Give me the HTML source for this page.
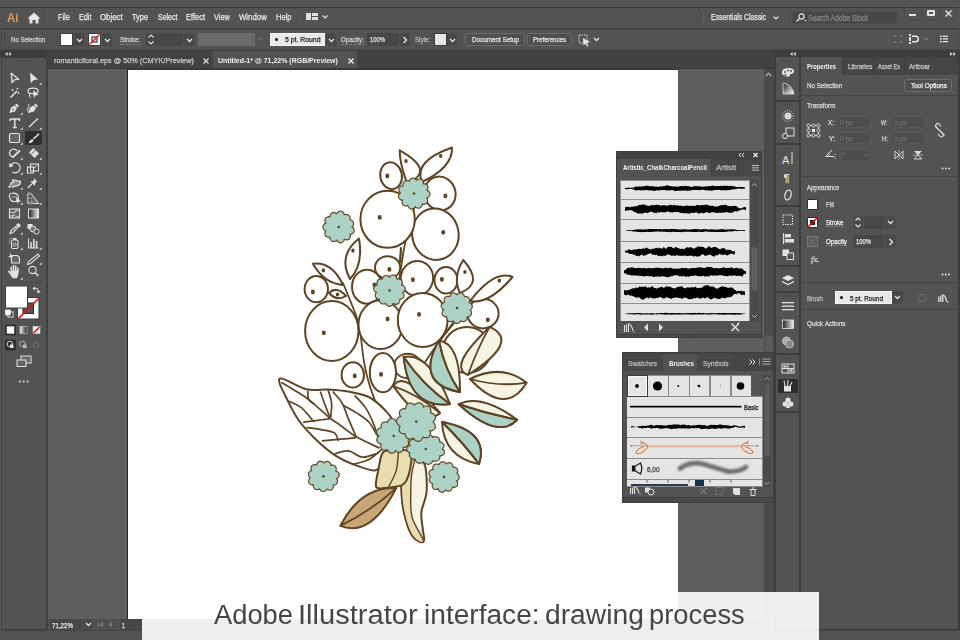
<!DOCTYPE html>
<html><head><meta charset="utf-8">
<style>
*{margin:0;padding:0;box-sizing:border-box}
html,body{width:960px;height:640px;overflow:hidden;background:#535353;font-family:"Liberation Sans",sans-serif}
.a{position:absolute}
.t{position:absolute;white-space:nowrap;transform-origin:0 0}
svg{overflow:visible}
</style></head><body>
<div class="a" style="left:0px;top:0px;width:960px;height:640px;background:#535353;"></div>
<div class="a" style="left:0px;top:7px;width:960px;height:1px;background:#3a3a3a;"></div>
<div class="a" style="left:0px;top:28px;width:960px;height:1px;background:#404040;"></div>
<div class="a" style="left:1px;top:29px;width:958px;height:21px;background:#474747;"></div>
<div class="a" style="left:2px;top:30px;width:956px;height:19px;background:#535353;"></div>
<div class="a" style="left:0px;top:50px;width:960px;height:7px;background:#3d3d3d;"></div>
<div class="a" style="left:47px;top:50px;width:728px;height:19px;background:#424242;"></div>
<div class="a" style="left:213px;top:51px;width:144px;height:18px;background:#535353;"></div>
<div class="a" style="left:47px;top:68px;width:728px;height:1px;background:#383838;"></div>
<div class="a" style="left:0px;top:57px;width:48px;height:574px;background:#3f3f3f;"></div>
<div class="a" style="left:0px;top:57px;width:1px;height:574px;background:#575757;"></div>
<div class="a" style="left:2px;top:58px;width:44px;height:571px;background:#535353;"></div>
<div class="a" style="left:48px;top:69px;width:716px;height:550px;background:#5e5e5e;"></div>
<div class="a" style="left:127px;top:69px;width:1px;height:550px;background:#262626;"></div>
<div class="a" style="left:128px;top:69px;width:551px;height:1px;background:#3a3a3a;"></div>
<div class="a" style="left:678px;top:70px;width:1px;height:549px;background:#555555;"></div>
<div class="a" style="left:128px;top:70px;width:550px;height:549px;background:#ffffff;"></div>
<div class="a" style="left:764px;top:69px;width:10px;height:550px;background:#4a4a4a;"></div>
<div class="a" style="left:774px;top:50px;width:186px;height:580px;background:#3d3d3d;"></div>
<div class="a" style="left:776px;top:57px;width:23px;height:572px;background:#535353;"></div>
<div class="a" style="left:801px;top:57px;width:157px;height:572px;background:#535353;"></div>
<div class="a" style="left:48px;top:619px;width:726px;height:11px;background:#535353;"></div>
<div class="a" style="left:0px;top:630px;width:960px;height:1px;background:#444444;"></div>
<div class="a" style="left:0px;top:631px;width:960px;height:9px;background:#535353;"></div>
<div class="a" style="left:50px;top:619px;width:32px;height:11px;background:#474747;"></div>
<div class="t" style="left:52.00px;top:621.51px;font-size:7.2px;line-height:7.2px;color:#e8e8e8;-webkit-text-stroke:0.25px;transform:scaleX(0.860);">71,22%</div>
<div class="a" style="left:83px;top:619px;width:10px;height:11px;background:#4a4a4a;"></div>
<svg class="a" style="left:85px;top:622px;" width="7" height="5" viewBox="0 0 7 5"><path d="M1 1 L3.5 3.5 L6 1" stroke="#e6e6e6" stroke-width="1.3" fill="none"/></svg>
<div class="a" style="left:94px;top:619px;width:24px;height:11px;background:#4f4f4f;"></div>
<svg class="a" style="left:98px;top:621px;" width="18" height="7" viewBox="0 0 18 7"><rect x="0" y="0.5" width="1" height="6" fill="#777"/><path d="M5 0.5 L1.5 3.5 L5 6.5Z" fill="#777"/><path d="M14 0.5 L10.5 3.5 L14 6.5Z" fill="#777"/></svg>
<div class="a" style="left:120px;top:619px;width:22px;height:11px;background:#474747;"></div>
<div class="t" style="left:121.50px;top:621.51px;font-size:7.2px;line-height:7.2px;color:#e8e8e8;-webkit-text-stroke:0.25px;transform:scaleX(0.749);">1</div>
<div class="t" style="left:7.00px;top:10.57px;font-size:13.5px;line-height:13.5px;color:#d9955c;font-weight:bold;transform:scaleX(0.852);">Ai</div>
<svg class="a" style="left:27px;top:12px;" width="14" height="12" viewBox="0 0 14 12"><path d="M7 0.5 L13.5 6.5 L11.5 6.5 L11.5 11.5 L8.5 11.5 L8.5 8 L5.5 8 L5.5 11.5 L2.5 11.5 L2.5 6.5 L0.5 6.5 Z" fill="#e6e6e6"/></svg>
<div class="a" style="left:47px;top:10px;width:1px;height:14px;background:#5c5c5c;"></div>
<div class="t" style="left:57.80px;top:13.15px;font-size:8.8px;line-height:8.8px;color:#e8e8e8;-webkit-text-stroke:0.25px;transform:scaleX(0.825);">File</div>
<div class="t" style="left:78.90px;top:13.15px;font-size:8.8px;line-height:8.8px;color:#e8e8e8;-webkit-text-stroke:0.25px;transform:scaleX(0.824);">Edit</div>
<div class="t" style="left:100.30px;top:13.15px;font-size:8.8px;line-height:8.8px;color:#e8e8e8;-webkit-text-stroke:0.25px;transform:scaleX(0.893);">Object</div>
<div class="t" style="left:132.00px;top:13.15px;font-size:8.8px;line-height:8.8px;color:#e8e8e8;-webkit-text-stroke:0.25px;transform:scaleX(0.839);">Type</div>
<div class="t" style="left:157.50px;top:13.15px;font-size:8.8px;line-height:8.8px;color:#e8e8e8;-webkit-text-stroke:0.25px;transform:scaleX(0.793);">Select</div>
<div class="t" style="left:186.30px;top:13.15px;font-size:8.8px;line-height:8.8px;color:#e8e8e8;-webkit-text-stroke:0.25px;transform:scaleX(0.851);">Effect</div>
<div class="t" style="left:214.20px;top:13.15px;font-size:8.8px;line-height:8.8px;color:#e8e8e8;-webkit-text-stroke:0.25px;transform:scaleX(0.835);">View</div>
<div class="t" style="left:239.20px;top:13.15px;font-size:8.8px;line-height:8.8px;color:#e8e8e8;-webkit-text-stroke:0.25px;transform:scaleX(0.888);">Window</div>
<div class="t" style="left:275.80px;top:13.15px;font-size:8.8px;line-height:8.8px;color:#e8e8e8;-webkit-text-stroke:0.25px;transform:scaleX(0.856);">Help</div>
<div class="a" style="left:299px;top:12px;width:1px;height:12px;background:#5e5e5e;"></div>
<svg class="a" style="left:306px;top:13px;" width="12" height="8" viewBox="0 0 12 8"><rect x="0" y="0" width="5" height="7" fill="#e0e0e0"/><rect x="6" y="0" width="6" height="3" fill="#e0e0e0"/><rect x="6" y="4" width="6" height="3" fill="#e0e0e0"/></svg>
<svg class="a" style="left:322px;top:15px;" width="6" height="4" viewBox="0 0 6 4"><path d="M0.5 0.5 L3 3 L5.5 0.5" stroke="#e0e0e0" stroke-width="1.2" fill="none"/></svg>
<div class="a" style="left:703px;top:11px;width:1px;height:13px;background:#5e5e5e;"></div>
<div class="t" style="left:710.80px;top:13.15px;font-size:8.8px;line-height:8.8px;color:#e8e8e8;-webkit-text-stroke:0.25px;transform:scaleX(0.776);">Essentials Classic</div>
<svg class="a" style="left:773px;top:16px;" width="6" height="4" viewBox="0 0 6 4"><path d="M0.5 0.5 L3 3 L5.5 0.5" stroke="#e0e0e0" stroke-width="1.2" fill="none"/></svg>
<div class="a" style="left:786px;top:11px;width:1px;height:13px;background:#5e5e5e;"></div>
<div class="a" style="left:792px;top:11px;width:106px;height:13px;background:#474747;border-radius:2px;border:1px solid #4e4e4e;"></div>
<svg class="a" style="left:795px;top:13px;" width="12" height="9" viewBox="0 0 12 9"><circle cx="6.5" cy="3.5" r="2.6" stroke="#e6e6e6" stroke-width="1.2" fill="none"/><path d="M4.6 5.4 L1.5 8.5" stroke="#e6e6e6" stroke-width="1.4"/><path d="M9 7 L12 7 L10.5 8.6Z" fill="#d0d0d0"/></svg>
<div class="t" style="left:808.00px;top:13.57px;font-size:8.3px;line-height:8.3px;color:#8b8b8b;-webkit-text-stroke:0.25px;transform:scaleX(0.804);">Search Adobe Stock</div>
<div class="a" style="left:904px;top:7px;width:53px;height:13px;border:1px solid #4a4a4a;border-top:none;border-radius:0 0 3px 3px;"></div>
<div class="a" style="left:922px;top:8px;width:1px;height:11px;background:#4a4a4a;"></div>
<div class="a" style="left:939px;top:8px;width:1px;height:11px;background:#4a4a4a;"></div>
<div class="a" style="left:909px;top:14px;width:7px;height:2px;background:#e6e6e6;"></div>
<div class="a" style="left:927px;top:10px;width:8px;height:6px;border:2px solid #e6e6e6;border-radius:1px;"></div>
<svg class="a" style="left:945px;top:10px;" width="7" height="7" viewBox="0 0 7 7"><path d="M0.5 0.5 L6.5 6.5 M6.5 0.5 L0.5 6.5" stroke="#e6e6e6" stroke-width="1.3"/></svg>
<svg class="a" style="left:4px;top:33px;" width="2" height="13" viewBox="0 0 2 13"><path d="M1 0 V13" stroke="#3a3a3a" stroke-width="1.5" stroke-dasharray="1 1"/></svg>
<div class="t" style="left:10.60px;top:36.31px;font-size:7.2px;line-height:7.2px;color:#d4d4d4;-webkit-text-stroke:0.25px;transform:scaleX(0.843);">No Selection</div>
<div class="a" style="left:57px;top:32px;width:1px;height:15px;background:#4a4a4a;"></div>
<div class="a" style="left:60px;top:33px;width:13px;height:13px;background:#ffffff;border:1px solid #3c3c3c;"></div>
<div class="a" style="left:74px;top:33px;width:10px;height:13px;background:#474747;border-radius:2px;"></div>
<svg class="a" style="left:75.5px;top:38px;" width="7" height="5" viewBox="0 0 7 5"><path d="M1 1 L3.5 3.5 L6 1" stroke="#e6e6e6" stroke-width="1.3" fill="none"/></svg>
<div class="a" style="left:88px;top:33px;width:13px;height:13px;background:#ffffff;border:1px solid #3c3c3c;"></div>
<svg class="a" style="left:88px;top:33px;" width="13" height="13" viewBox="0 0 13 13"><rect x="4" y="4" width="5" height="5" fill="none" stroke="#333" stroke-width="1.2"/><path d="M1.5 11.5 L11.5 1.5" stroke="#ee1c24" stroke-width="1.6"/></svg>
<div class="a" style="left:102px;top:33px;width:10px;height:13px;background:#474747;border-radius:2px;"></div>
<svg class="a" style="left:103.5px;top:38px;" width="7" height="5" viewBox="0 0 7 5"><path d="M1 1 L3.5 3.5 L6 1" stroke="#e6e6e6" stroke-width="1.3" fill="none"/></svg>
<div class="t" style="left:120.00px;top:36.31px;font-size:7.2px;line-height:7.2px;color:#d4d4d4;-webkit-text-stroke:0.25px;transform:scaleX(0.877);">Stroke:</div>
<div class="a" style="left:120px;top:43.5px;width:20px;height:1px;border-bottom:1px dotted #8c8c8c;"></div>
<div class="a" style="left:146px;top:33px;width:10px;height:13px;background:#474747;border-radius:2px;"></div>
<svg class="a" style="left:147px;top:34px;" width="8" height="11" viewBox="0 0 8 11"><path d="M1.5 3.5 L4 1 L6.5 3.5 M1.5 7.5 L4 10 L6.5 7.5" stroke="#e0e0e0" stroke-width="1.1" fill="none"/></svg>
<div class="a" style="left:156px;top:33px;width:27px;height:13px;background:#474747;"></div>
<div class="a" style="left:184px;top:33px;width:10px;height:13px;background:#474747;border-radius:2px;"></div>
<svg class="a" style="left:185.5px;top:38px;" width="7" height="5" viewBox="0 0 7 5"><path d="M1 1 L3.5 3.5 L6 1" stroke="#e6e6e6" stroke-width="1.3" fill="none"/></svg>
<div class="a" style="left:198px;top:33px;width:57px;height:13px;background:#6b6b6b;"></div>
<svg class="a" style="left:257px;top:37px;" width="7" height="5" viewBox="0 0 7 5"><path d="M1 1 L3.5 3.5 L6 1" stroke="#6a6a6a" stroke-width="1.2" fill="none"/></svg>
<div class="a" style="left:270px;top:33px;width:55px;height:13px;background:#e8e8e8;border:1px solid #f4f4f4;"></div>
<div class="a" style="left:275px;top:38px;width:3px;height:3px;background:#111;border-radius:50%;"></div>
<div class="t" style="left:284.50px;top:36.31px;font-size:7.2px;line-height:7.2px;color:#222;-webkit-text-stroke:0.25px;transform:scaleX(0.954);">5 pt. Round</div>
<div class="a" style="left:326px;top:33px;width:10px;height:13px;background:#474747;border-radius:2px;"></div>
<svg class="a" style="left:327.5px;top:38px;" width="7" height="5" viewBox="0 0 7 5"><path d="M1 1 L3.5 3.5 L6 1" stroke="#e6e6e6" stroke-width="1.3" fill="none"/></svg>
<div class="t" style="left:341.00px;top:36.31px;font-size:7.2px;line-height:7.2px;color:#d4d4d4;-webkit-text-stroke:0.25px;transform:scaleX(0.871);">Opacity:</div>
<div class="a" style="left:341px;top:43.5px;width:23px;height:1px;border-bottom:1px dotted #8c8c8c;"></div>
<div class="a" style="left:367px;top:33px;width:32px;height:13px;background:#474747;"></div>
<div class="t" style="left:369.50px;top:36.31px;font-size:7.2px;line-height:7.2px;color:#e0e0e0;-webkit-text-stroke:0.25px;transform:scaleX(0.815);">100%</div>
<div class="a" style="left:400px;top:33px;width:10px;height:13px;background:#474747;border-radius:2px;"></div>
<svg class="a" style="left:402px;top:36px;" width="6" height="8" viewBox="0 0 6 8"><path d="M1.5 1 L4.5 4 L1.5 7" stroke="#e6e6e6" stroke-width="1.3" fill="none"/></svg>
<div class="t" style="left:415.00px;top:36.31px;font-size:7.2px;line-height:7.2px;color:#bcbcbc;-webkit-text-stroke:0.25px;transform:scaleX(0.833);">Style:</div>
<div class="a" style="left:434px;top:33px;width:13px;height:13px;background:#e6e6e6;border:1px solid #3c3c3c;"></div>
<div class="a" style="left:447px;top:33px;width:10px;height:13px;background:#474747;border-radius:2px;"></div>
<svg class="a" style="left:448.5px;top:38px;" width="7" height="5" viewBox="0 0 7 5"><path d="M1 1 L3.5 3.5 L6 1" stroke="#e6e6e6" stroke-width="1.3" fill="none"/></svg>
<div class="a" style="left:461px;top:32px;width:1px;height:15px;background:#4a4a4a;"></div>
<div class="a" style="left:465px;top:33px;width:60px;height:13px;background:#4f4f4f;border:1px solid #6a6a6a;border-radius:3px;"></div>
<div class="t" style="left:471.50px;top:36.31px;font-size:7.2px;line-height:7.2px;color:#e6e6e6;-webkit-text-stroke:0.25px;transform:scaleX(0.876);">Document Setup</div>
<div class="a" style="left:527px;top:33px;width:45px;height:13px;background:#4f4f4f;border:1px solid #6a6a6a;border-radius:3px;"></div>
<div class="t" style="left:533.00px;top:36.31px;font-size:7.2px;line-height:7.2px;color:#e6e6e6;-webkit-text-stroke:0.25px;transform:scaleX(0.850);">Preferences</div>
<svg class="a" style="left:578px;top:34px;" width="13" height="12" viewBox="0 0 13 12"><rect x="1" y="1" width="8" height="8" fill="none" stroke="#ddd" stroke-width="1" stroke-dasharray="1.5 1"/><path d="M5 4 L12 8 L9 9 L10.5 12 L9 12.5 L7.5 9.8 L5.5 11.5Z" fill="#e6e6e6"/></svg>
<svg class="a" style="left:592.5px;top:37px;" width="7" height="5" viewBox="0 0 7 5"><path d="M1 1 L3.5 3.5 L6 1" stroke="#e6e6e6" stroke-width="1.3" fill="none"/></svg>
<svg class="a" style="left:894px;top:35px;" width="8" height="8" viewBox="0 0 8 8"><g fill="#707070"><rect x="0" y="0" width="2" height="2"/><rect x="6" y="0" width="2" height="2"/><rect x="0" y="6" width="2" height="2"/><rect x="6" y="6" width="2" height="2"/></g></svg>
<svg class="a" style="left:909px;top:34px;" width="11" height="10" viewBox="0 0 11 10"><g fill="#e6e6e6"><rect x="0" y="0" width="2" height="2"/><rect x="0" y="3" width="2" height="4"/><rect x="0" y="8" width="2" height="2"/></g><path d="M3 2.2 H6.5 A2.8 2.8 0 0 1 6.5 7.8 H3" stroke="#e6e6e6" stroke-width="1.5" fill="none"/></svg>
<svg class="a" style="left:923px;top:37px;" width="6" height="4" viewBox="0 0 6 4"><path d="M0.5 0.5 L3 3 L5.5 0.5" stroke="#8a8a8a" stroke-width="1" fill="none"/></svg>
<svg class="a" style="left:940px;top:35px;" width="8" height="8" viewBox="0 0 8 8"><g fill="#e0e0e0"><rect x="0" y="0.5" width="1.6" height="1.6"/><rect x="0" y="3.2" width="1.6" height="1.6"/><rect x="0" y="5.9" width="1.6" height="1.6"/><rect x="2.6" y="0.6" width="5.4" height="1.3"/><rect x="2.6" y="3.3" width="5.4" height="1.3"/><rect x="2.6" y="6" width="5.4" height="1.3"/></g></svg>
<svg class="a" style="left:5px;top:52.3px;" width="6" height="4" viewBox="0 0 6 4"><path d="M2.6 0 L0 2 L2.6 4Z M5.8 0 L3.2 2 L5.8 4Z" fill="#d6d6d6"/></svg>
<svg class="a" style="left:790px;top:52.3px;" width="6" height="4" viewBox="0 0 6 4"><path d="M2.6 0 L0 2 L2.6 4Z M5.8 0 L3.2 2 L5.8 4Z" fill="#d6d6d6"/></svg>
<svg class="a" style="left:950px;top:52.3px;" width="6" height="4" viewBox="0 0 6 4"><path d="M0 0 L2.6 2 L0 4Z M3.2 0 L5.8 2 L3.2 4Z" fill="#d6d6d6"/></svg>
<div class="t" style="left:53.50px;top:56.94px;font-size:7.4px;line-height:7.4px;color:#c8c8c8;-webkit-text-stroke:0.25px;transform:scaleX(0.989);">romanticfloral.eps @ 50% (CMYK/Preview)</div>
<svg class="a" style="left:202.5px;top:58px;" width="6" height="6" viewBox="0 0 6 6"><path d="M0.5 0.5 L5.5 5.5 M5.5 0.5 L0.5 5.5" stroke="#e0e0e0" stroke-width="1.2"/></svg>
<div class="t" style="left:218.00px;top:56.94px;font-size:7.4px;line-height:7.4px;color:#f0f0f0;font-weight:bold;transform:scaleX(0.946);">Untitled-1* @ 71,22% (RGB/Preview)</div>
<svg class="a" style="left:348px;top:58px;" width="6" height="6" viewBox="0 0 6 6"><path d="M0.5 0.5 L5.5 5.5 M5.5 0.5 L0.5 5.5" stroke="#f0f0f0" stroke-width="1.3"/></svg>
<svg class="a" style="left:765px;top:72px;" width="7" height="5" viewBox="0 0 7 5"><path d="M0.8 4 L3.5 1.2 L6.2 4" stroke="#bdbdbd" stroke-width="1.1" fill="none"/></svg>
<svg class="a" style="left:18px;top:60px;" width="12" height="2" viewBox="0 0 12 2"><path d="M0 1 H12" stroke="#3c3c3c" stroke-width="1.5" stroke-dasharray="1 1"/></svg>
<svg class="a" style="left:0;top:0" width="48" height="400" viewBox="0 0 48 400"><path d="M41.7 82.3 L41.7 84.7 L39.3 84.7Z" fill="#e2e2e2"/><path d="M22.7 112.3 L22.7 114.7 L20.3 114.7Z" fill="#e2e2e2"/><path d="M22.7 127.3 L22.7 129.7 L20.3 129.7Z" fill="#e2e2e2"/><path d="M41.7 127.3 L41.7 129.7 L39.3 129.7Z" fill="#e2e2e2"/><path d="M22.7 142.3 L22.7 144.7 L20.3 144.7Z" fill="#e2e2e2"/><path d="M41.7 142.3 L41.7 144.7 L39.3 144.7Z" fill="#e2e2e2"/><path d="M22.7 157.3 L22.7 159.7 L20.3 159.7Z" fill="#e2e2e2"/><path d="M41.7 157.3 L41.7 159.7 L39.3 159.7Z" fill="#e2e2e2"/><path d="M22.7 172.3 L22.7 174.7 L20.3 174.7Z" fill="#e2e2e2"/><path d="M41.7 172.3 L41.7 174.7 L39.3 174.7Z" fill="#e2e2e2"/><path d="M22.7 187.3 L22.7 189.7 L20.3 189.7Z" fill="#e2e2e2"/><path d="M41.7 187.3 L41.7 189.7 L39.3 189.7Z" fill="#e2e2e2"/><path d="M22.7 202.3 L22.7 204.7 L20.3 204.7Z" fill="#e2e2e2"/><path d="M41.7 202.3 L41.7 204.7 L39.3 204.7Z" fill="#e2e2e2"/><path d="M22.7 232.3 L22.7 234.7 L20.3 234.7Z" fill="#e2e2e2"/><path d="M22.7 247.3 L22.7 249.7 L20.3 249.7Z" fill="#e2e2e2"/><path d="M41.7 247.3 L41.7 249.7 L39.3 249.7Z" fill="#e2e2e2"/><path d="M41.7 262.3 L41.7 264.7 L39.3 264.7Z" fill="#e2e2e2"/><path d="M22.7 277.3 L22.7 279.7 L20.3 279.7Z" fill="#e2e2e2"/><rect x="25" y="131" width="17" height="14" rx="1.5" fill="#2e2e2e"/><path d="M11.3 73.2 L18.6 79.3 L14.8 79.6 L12 82.6Z" fill="none" stroke="#e2e2e2" stroke-width="1.3" stroke-linejoin="round"/><path d="M30 72.6 L38.2 79.6 L33.8 79.9 L30.8 83.2Z" fill="#e2e2e2"/><path d="M10.5 97.5 L17 91" stroke="#e2e2e2" stroke-width="1.6"/><circle cx="12.5" cy="90" r="0.9" fill="#e2e2e2"/><circle cx="17.5" cy="88.6" r="0.9" fill="#e2e2e2"/><circle cx="18.5" cy="93" r="0.9" fill="#e2e2e2"/><ellipse cx="33" cy="91" rx="5" ry="2.8" fill="none" stroke="#e2e2e2" stroke-width="1.2"/><path d="M29.5 93 Q28.5 97 31 98" fill="none" stroke="#e2e2e2" stroke-width="1"/><path d="M33 90 L38.8 95 L35.8 95.2 L34 98Z" fill="#e2e2e2"/><path d="M16.5 103.5 L19 106 L17.5 107.5 L15 105Z" fill="#e2e2e2"/><path d="M14.5 105.5 L17 108 L15 111.5 L9.5 113 L11 107.5Z" fill="#e2e2e2"/><circle cx="13" cy="109.6" r="0.9" fill="#535353"/><path d="M35.5 103.5 L38 106 L36.5 107.5 L34 105Z" fill="#e2e2e2"/><path d="M33.5 105.5 L36 108 L34 111.5 L28.5 113 L30 107.5Z" fill="#e2e2e2"/><path d="M28.5 104 Q30 106 28 108 Q27 111 29 113" stroke="#e2e2e2" stroke-width="0.9" fill="none"/><path d="M10 119 H19.5 V121 M10 119 V121 M14.8 119 V127.5 M12.8 127.5 H16.8" stroke="#e2e2e2" stroke-width="1.5" fill="none"/><path d="M29 127 L38 118.5" stroke="#e2e2e2" stroke-width="1.3"/><rect x="9.5" y="133.5" width="10" height="9" rx="1.2" fill="#666" stroke="#e2e2e2" stroke-width="1.2"/><path d="M38.6 133.3 L39.6 134.3 L34 139.6 L32.8 138.4Z" fill="#e2e2e2"/><path d="M32.3 139 L33.5 140.2 Q32.5 143 28.6 143.3 Q29.5 140 32.3 139Z" fill="#e2e2e2"/><path d="M13 157 A4 4 0 1 1 17 151" fill="none" stroke="#e2e2e2" stroke-width="1.3"/><path d="M12.5 157.5 L20 150.5" stroke="#e2e2e2" stroke-width="1.8"/><path d="M33.5 148 L39 153.5 L34.5 158 L29 152.5Z" fill="#e2e2e2"/><path d="M31 154.5 L35.5 150" stroke="#535353" stroke-width="0.9"/><path d="M10.5 166 A5 5 0 1 1 12.5 172" fill="none" stroke="#e2e2e2" stroke-width="1.2"/><path d="M9 163 L9.5 167.5 L13.5 166Z" fill="#e2e2e2"/><rect x="27.5" y="167" width="6" height="6" fill="none" stroke="#e2e2e2" stroke-width="1.1"/><rect x="30.5" y="164" width="8" height="7" fill="none" stroke="#e2e2e2" stroke-width="1.1"/><path d="M34 168 L37.5 165" stroke="#e2e2e2" stroke-width="1"/><path d="M10.5 185.5 Q11 181 13.5 182.5 Q14 179 16.5 180.5 Q18.5 182 20.3 181 Q21 185 17.5 185.5 Q14.5 186.5 12 187" stroke="#e2e2e2" stroke-width="1.3" fill="#8a8a8a" stroke-linejoin="round"/><circle cx="9.6" cy="186.8" r="1.2" fill="#e2e2e2"/><circle cx="12.8" cy="180" r="1" fill="#e2e2e2"/><path d="M33.5 177.8 L37.2 181.5 L35.8 182.2 L34.6 185.8 L30.5 181.7 L34 180.6Z" fill="#e2e2e2"/><path d="M31.8 184 L27.8 188" stroke="#e2e2e2" stroke-width="1.3"/><path d="M10 198.5 Q8 194 12 193.2 Q16.5 192.5 18.3 196 Q19.2 200 15.5 201.5 Q11.5 202.5 10 198.5Z" fill="none" stroke="#e2e2e2" stroke-width="1.1"/><path d="M11.5 197 L16 197" stroke="#999" stroke-width="1.5"/><path d="M15.8 196.2 L21 201.5 L18.5 201.7 L17.2 204Z" fill="#e2e2e2"/><path d="M27.8 193.2 L30.8 193.2 L38.8 203.6 L27.8 203.6Z" fill="#6d6d6d" stroke="#e2e2e2" stroke-width="1"/><path d="M27.8 193.2 L30.8 193.2 L33 203.6 L27.8 203.6Z" fill="#9a9a9a"/><path d="M28 196.5 H32 M28 200 H33.5 M30 193.5 V203.5" stroke="#444" stroke-width="0.9"/><rect x="9.5" y="209" width="10" height="9" fill="#5f5f5f" stroke="#e2e2e2" stroke-width="1.1"/><path d="M10 212 Q14 214 19 210 M12 218 Q13 213 17 209 M10 216 Q15 215 19 217" stroke="#e2e2e2" stroke-width="0.8" fill="none"/><defs><linearGradient id="gr1" x1="0" x2="1"><stop offset="0" stop-color="#222"/><stop offset="1" stop-color="#f0f0f0"/></linearGradient></defs><rect x="28.5" y="209" width="10" height="9" fill="url(#gr1)" stroke="#e2e2e2" stroke-width="1"/><path d="M18.8 224 L19.8 225 L13 232.5 L10 233.5 L11 230.5Z" fill="none" stroke="#e2e2e2" stroke-width="1.2"/><path d="M17 224 L20 227" stroke="#e2e2e2" stroke-width="2"/><rect x="27.5" y="224" width="5" height="5" fill="#e2e2e2"/><circle cx="33" cy="229" r="3" fill="#777" stroke="#e2e2e2" stroke-width="1"/><circle cx="36.5" cy="231.5" r="2.6" fill="#535353" stroke="#e2e2e2" stroke-width="1"/><rect x="11.5" y="240" width="6.5" height="8.5" rx="1.5" fill="none" stroke="#e2e2e2" stroke-width="1.1"/><rect x="13" y="238" width="3.5" height="2" fill="#e2e2e2"/><circle cx="14.7" cy="244.5" r="1.5" fill="none" stroke="#e2e2e2" stroke-width="0.9"/><path d="M9 239 h1 M9 241 h1 M9 243 h1 M11 238.5 h1" stroke="#e2e2e2" stroke-width="0.8"/><path d="M28.5 238.5 V248 H38.5" stroke="#e2e2e2" stroke-width="1" fill="none"/><rect x="30.2" y="242" width="1.6" height="6" fill="#e2e2e2"/><rect x="33" y="239" width="1.6" height="9" fill="#e2e2e2"/><rect x="35.8" y="241" width="1.6" height="7" fill="#e2e2e2"/><path d="M11.5 255.5 H17.5 L19.5 257.5 V263 H11.5Z" fill="#666" stroke="#e2e2e2" stroke-width="1.1"/><path d="M8.5 256.5 H13 M10.5 253.5 V258" stroke="#e2e2e2" stroke-width="0.9"/><path d="M38 254 L39.5 256 L30.5 263.5 L27.5 264.5 L28.5 261.5Z" fill="none" stroke="#e2e2e2" stroke-width="1.1"/><g stroke="#e2e2e2" stroke-width="1.5" stroke-linecap="round" fill="none"><path d="M11.3 272 V267.2"/><path d="M13.5 271 V265.6"/><path d="M15.7 271 V266"/><path d="M17.8 272 V268"/><path d="M8.8 271.2 L11.5 275"/></g><path d="M10.6 270.5 H18.6 Q18.8 275.5 16.8 278.3 H12.5 Q11 276.5 10.6 274Z" fill="#e2e2e2"/><circle cx="32.5" cy="270" r="3.6" fill="none" stroke="#e2e2e2" stroke-width="1.1"/><path d="M35 272.5 L38.5 276" stroke="#e2e2e2" stroke-width="1.6"/><rect x="5" y="282" width="38" height="1" fill="#4a4a4a"/><rect x="17.5" y="297.5" width="21.5" height="21.5" fill="#fff" stroke="#3a3a3a" stroke-width="1"/><rect x="23" y="303" width="10.5" height="10.5" fill="#535353" stroke="#2a2a2a" stroke-width="1"/><path d="M18.5 318.5 L38.5 298.5" stroke="#f00" stroke-width="1.6"/><rect x="5.5" y="286" width="22" height="22" fill="#fff" stroke="#3a3a3a" stroke-width="1"/><path d="M34 288.5 Q38.5 287.5 38.5 292" stroke="#e2e2e2" stroke-width="1.1" fill="none"/><path d="M32.5 288.5 L35 286.5 L35 290.5Z M38.5 293.5 L36.5 291 L40.5 291Z" fill="#e2e2e2"/><rect x="8" y="312" width="5" height="5" fill="#333" stroke="#e2e2e2" stroke-width="1"/><rect x="5.5" y="310" width="5" height="5" fill="#fff" stroke="#e2e2e2" stroke-width="0.8"/><rect x="5" y="324.5" width="11" height="11" rx="1.5" fill="#2f2f2f"/><rect x="7" y="326.5" width="7" height="7" fill="#fff" stroke="#ddd" stroke-width="0.5"/><defs><linearGradient id="gr2" x1="0" x2="1"><stop offset="0" stop-color="#f4f4f4"/><stop offset="1" stop-color="#222"/></linearGradient></defs><rect x="20" y="326.5" width="7" height="7" fill="url(#gr2)" stroke="#ccc" stroke-width="0.6"/><rect x="33" y="326.5" width="7" height="7" fill="#fff" stroke="#ccc" stroke-width="0.6"/><path d="M33.5 333 L39.5 327" stroke="#f00" stroke-width="1.4"/><rect x="5" y="339.5" width="11" height="11" rx="1.5" fill="#2f2f2f"/><circle cx="9.8" cy="344" r="2.8" fill="none" stroke="#e2e2e2" stroke-width="0.9"/><rect x="10" y="344.5" width="3.5" height="3.5" fill="#e2e2e2"/><circle cx="22.5" cy="344" r="2.8" fill="none" stroke="#bbb" stroke-width="0.9"/><rect x="23" y="344.5" width="3.5" height="3.5" fill="#bbb"/><circle cx="36" cy="345" r="2.8" fill="none" stroke="#777" stroke-width="0.9"/><rect x="21" y="356" width="10" height="7" fill="#666" stroke="#e2e2e2" stroke-width="1"/><rect x="17" y="360" width="9" height="6.5" fill="#666" stroke="#e2e2e2" stroke-width="1"/><circle cx="20" cy="381.5" r="1" fill="#e2e2e2"/><circle cx="23.8" cy="381.5" r="1" fill="#e2e2e2"/><circle cx="27.6" cy="381.5" r="1" fill="#e2e2e2"/></svg>
<svg class="a" style="left:0;top:0" width="960" height="640" viewBox="0 0 960 640"><path d="M415.0 205.0 Q405.0 240.0 402.5 257.5 Q400.0 275.0 396.0 300.0" fill="none" stroke="#5f4322" stroke-width="1.8" stroke-linecap="round"/><path d="M343.0 283.0 Q350.0 300.0 355.0 312.5 Q360.0 325.0 362.0 346.5 Q364.0 368.0 370.0 386.5 Q376.0 405.0 392.0 440.0" fill="none" stroke="#5f4322" stroke-width="1.8" stroke-linecap="round"/><path d="M455.0 322.0 Q440.0 340.0 432.5 351.0 Q425.0 362.0 410.0 385.0" fill="none" stroke="#5f4322" stroke-width="1.8" stroke-linecap="round"/><path d="M488.0 298.0 L470.0 316.0" fill="none" stroke="#5f4322" stroke-width="1.5" stroke-linecap="round"/><path d="M279.7 378.6 C282.8 376.7 298.2 387.4 306.2 389.2 C314.3 391.0 321.1 389.1 328.1 389.5 C335.2 389.9 341.7 390.3 348.4 391.5 C355.2 392.8 362.8 394.0 368.8 397.0 C374.7 400.0 380.2 405.1 384.4 409.5 C388.5 413.9 392.7 417.6 393.8 423.6 C394.8 429.6 392.2 439.4 390.6 445.4 C389.1 451.4 387.0 455.3 384.4 459.5 C381.8 463.7 380.2 469.7 375.0 470.4 C369.8 471.2 359.9 466.8 353.1 464.2 C346.4 461.6 340.6 459.0 334.4 454.8 C328.1 450.6 321.4 444.7 315.6 439.2 C309.9 433.7 304.7 428.5 300.0 422.0 C295.3 415.5 290.9 407.4 287.5 400.1 C284.1 392.9 276.6 380.4 279.7 378.6Z" fill="#fff" stroke="#5f4322" stroke-width="2.0" stroke-linejoin="round"/><path d="M281.2 382.2 C283.6 383.6 290.6 387.8 295.3 390.8 C300.0 393.7 303.5 395.5 309.4 400.1 C315.2 404.8 327.0 415.5 330.5 418.6" fill="none" stroke="#5f4322" stroke-width="1.7"/><path d="M288.3 400.9 C290.5 402.1 297.3 404.4 301.6 407.9 C305.9 411.5 312.0 419.7 314.1 422.0" fill="none" stroke="#5f4322" stroke-width="1.7"/><path d="M303.1 422.3 C305.5 422.0 312.6 421.1 317.2 420.4 C321.7 419.8 328.3 418.9 330.5 418.6" fill="none" stroke="#5f4322" stroke-width="1.7"/><path d="M307.8 390.8 C307.9 392.2 307.6 397.1 308.6 399.3 C309.6 401.6 313.2 403.2 314.1 404.0" fill="none" stroke="#5f4322" stroke-width="1.7"/><path d="M320.3 391.5 C321.1 393.7 323.4 400.5 325.0 404.8 C326.6 409.2 329.2 415.5 330.0 417.6" fill="none" stroke="#5f4322" stroke-width="1.7"/><path d="M328.1 390.0 C328.7 392.2 331.2 398.6 331.6 403.2 C332.0 407.9 330.7 415.6 330.5 418.1" fill="none" stroke="#5f4322" stroke-width="1.7"/><path d="M330.5 418.6 C332.4 419.9 337.9 423.6 342.2 426.7 C346.5 429.7 350.0 433.2 356.2 436.8 C362.5 440.4 375.8 446.3 379.7 448.2" fill="none" stroke="#5f4322" stroke-width="1.7"/><path d="M332.8 391.5 C334.4 393.5 339.6 398.7 342.2 403.2 C344.8 407.8 346.1 413.3 348.4 418.9 C350.8 424.5 354.9 433.8 356.2 436.8" fill="none" stroke="#5f4322" stroke-width="1.7"/><path d="M343.8 405.6 C345.8 406.8 352.1 409.9 356.2 412.6 C360.4 415.4 365.4 418.4 368.8 422.0 C372.1 425.6 375.3 432.4 376.6 434.5" fill="none" stroke="#5f4322" stroke-width="1.7"/><path d="M354.7 395.4 C356.5 397.5 362.5 403.2 365.6 407.9 C368.8 412.6 371.4 418.6 373.4 423.6 C375.5 428.5 377.3 435.3 378.1 437.6" fill="none" stroke="#5f4322" stroke-width="1.7"/><path d="M306.2 427.5 C308.9 427.9 317.2 428.9 321.9 429.8 C326.6 430.7 331.6 431.1 334.4 432.9 C337.1 434.8 337.6 439.4 338.3 440.8" fill="none" stroke="#5f4322" stroke-width="1.7"/><path d="M321.9 440.8 C325.0 440.5 334.9 439.7 340.6 439.2 C346.4 438.7 353.6 437.9 356.2 437.6" fill="none" stroke="#5f4322" stroke-width="1.7"/><path d="M334.4 454.0 C336.7 453.5 343.8 450.4 348.4 450.9 C353.1 451.4 357.6 456.8 362.5 457.2 C367.4 457.5 375.5 453.9 378.1 453.2" fill="none" stroke="#5f4322" stroke-width="1.7"/><path d="M353.1 464.2 C355.7 463.4 363.5 462.4 368.8 459.5 C374.0 456.6 381.8 449.1 384.4 447.0" fill="none" stroke="#5f4322" stroke-width="1.7"/><ellipse cx="391.1" cy="175.7" rx="10.8" ry="13.5" transform="rotate(-10 391.1 175.7)" fill="#fff" stroke="#5f4322" stroke-width="2.0"/><ellipse cx="387.3" cy="176" rx="2" ry="2.4" fill="#5f4322"/><ellipse cx="440" cy="193.5" rx="15.5" ry="17" transform="rotate(-15 440 193.5)" fill="#fff" stroke="#5f4322" stroke-width="2.0"/><ellipse cx="445.4" cy="195.9" rx="2" ry="2.4" fill="#5f4322"/><ellipse cx="435.4" cy="234.2" rx="23.2" ry="25.8" transform="rotate(-10 435.4 234.2)" fill="#fff" stroke="#5f4322" stroke-width="2.0"/><ellipse cx="443.2" cy="232.3" rx="2" ry="2.4" fill="#5f4322"/><ellipse cx="387.6" cy="219.3" rx="27.2" ry="28.5" transform="rotate(0 387.6 219.3)" fill="#fff" stroke="#5f4322" stroke-width="2.0"/><ellipse cx="379.7" cy="217.4" rx="2" ry="2.4" fill="#5f4322"/><ellipse cx="316.3" cy="289.1" rx="11.7" ry="13.1" transform="rotate(0 316.3 289.1)" fill="#fff" stroke="#5f4322" stroke-width="2.0"/><ellipse cx="312.9" cy="292" rx="2" ry="2.4" fill="#5f4322"/><ellipse cx="367" cy="286.7" rx="15" ry="17" transform="rotate(0 367 286.7)" fill="#fff" stroke="#5f4322" stroke-width="2.0"/><ellipse cx="374.4" cy="284.8" rx="2" ry="2.4" fill="#5f4322"/><ellipse cx="387.6" cy="267.5" rx="12.6" ry="11.3" transform="rotate(0 387.6 267.5)" fill="#fff" stroke="#5f4322" stroke-width="2.0"/><ellipse cx="389.4" cy="269.4" rx="2" ry="2.4" fill="#5f4322"/><ellipse cx="416.9" cy="278.3" rx="16.2" ry="17.4" transform="rotate(10 416.9 278.3)" fill="#fff" stroke="#5f4322" stroke-width="2.0"/><ellipse cx="412.9" cy="279.7" rx="2" ry="2.4" fill="#5f4322"/><ellipse cx="446" cy="280.2" rx="11.5" ry="13.2" transform="rotate(0 446 280.2)" fill="#fff" stroke="#5f4322" stroke-width="2.0"/><ellipse cx="441.9" cy="279.4" rx="2" ry="2.4" fill="#5f4322"/><ellipse cx="483" cy="313.6" rx="15.6" ry="14.8" transform="rotate(0 483 313.6)" fill="#fff" stroke="#5f4322" stroke-width="2.0"/><ellipse cx="487.8" cy="319.8" rx="2" ry="2.4" fill="#5f4322"/><ellipse cx="407.7" cy="366" rx="13.6" ry="12.2" transform="rotate(0 407.7 366)" fill="#fff" stroke="#5f4322" stroke-width="2.0"/><ellipse cx="352.8" cy="374.9" rx="11.2" ry="12.7" transform="rotate(0 352.8 374.9)" fill="#fff" stroke="#5f4322" stroke-width="2.0"/><ellipse cx="354.7" cy="375.9" rx="2" ry="2.4" fill="#5f4322"/><ellipse cx="382.9" cy="372.6" rx="13.1" ry="19.7" transform="rotate(0 382.9 372.6)" fill="#fff" stroke="#5f4322" stroke-width="2.0"/><ellipse cx="381" cy="374.4" rx="2" ry="2.4" fill="#5f4322"/><ellipse cx="380.5" cy="324.7" rx="22" ry="24.4" transform="rotate(0 380.5 324.7)" fill="#fff" stroke="#5f4322" stroke-width="2.0"/><ellipse cx="387.6" cy="319" rx="2" ry="2.4" fill="#5f4322"/><ellipse cx="422.7" cy="320" rx="24.9" ry="27" transform="rotate(0 422.7 320)" fill="#fff" stroke="#5f4322" stroke-width="2.0"/><ellipse cx="419" cy="314.4" rx="2" ry="2.4" fill="#5f4322"/><ellipse cx="467" cy="350" rx="24" ry="23" transform="rotate(0 467 350)" fill="#fff" stroke="#5f4322" stroke-width="2.0"/><ellipse cx="331.8" cy="331" rx="26.7" ry="29.9" transform="rotate(0 331.8 331)" fill="#fff" stroke="#5f4322" stroke-width="2.0"/><ellipse cx="323.8" cy="332.8" rx="2" ry="2.4" fill="#5f4322"/><path d="M453.0 323.0 Q446.0 332.0 438.0 343.0" fill="none" stroke="#5f4322" stroke-width="2.0" stroke-linecap="round"/><path d="M401.0 248.0 L400.0 262.0" fill="none" stroke="#5f4322" stroke-width="2.2" stroke-linecap="round"/><path d="M407.0 183.0 Q399.6 163.3 399.7 150.3 Q436.6 171.3 407.0 183.0Z" fill="#fff" stroke="#5f4322" stroke-width="2.0" stroke-linejoin="round"/><ellipse cx="406" cy="161" rx="1.7" ry="2.1" fill="#5f4322"/><path d="M422.0 182.0 Q413.0 161.2 452.0 147.5 Q453.0 167.2 422.0 182.0Z" fill="#fff" stroke="#5f4322" stroke-width="2.0" stroke-linejoin="round"/><ellipse cx="440.7" cy="156" rx="1.7" ry="2.1" fill="#5f4322"/><path d="M350.0 279.0 Q337.5 255.2 359.0 238.5 Q363.5 265.2 350.0 279.0Z" fill="#fff" stroke="#5f4322" stroke-width="2.0" stroke-linejoin="round"/><ellipse cx="352.9" cy="250.7" rx="1.7" ry="2.1" fill="#5f4322"/><path d="M343.0 285.0 Q332.1 261.6 312.9 263.8 Q324.1 283.6 343.0 285.0Z" fill="#fff" stroke="#5f4322" stroke-width="2.0" stroke-linejoin="round"/><ellipse cx="323.4" cy="270.4" rx="1.7" ry="2.1" fill="#5f4322"/><path d="M346.0 296.0 Q336.5 285.5 329.0 293.0 Q336.5 301.5 346.0 296.0Z" fill="#fff" stroke="#5f4322" stroke-width="2.0" stroke-linejoin="round"/><ellipse cx="337.5" cy="294.5" rx="1.7" ry="2.1" fill="#5f4322"/><path d="M460.0 293.0 Q452.4 277.5 463.2 260.0 Q484.4 283.5 460.0 293.0Z" fill="#fff" stroke="#5f4322" stroke-width="2.0" stroke-linejoin="round"/><ellipse cx="464.9" cy="272" rx="1.7" ry="2.1" fill="#5f4322"/><path d="M470.0 301.0 Q494.8 269.0 512.5 277.0 Q488.8 305.0 470.0 301.0Z" fill="#fff" stroke="#5f4322" stroke-width="2.0" stroke-linejoin="round"/><ellipse cx="499.3" cy="280.7" rx="1.7" ry="2.1" fill="#5f4322"/><path d="M440.0 413.0 Q403.3 368.4 393.4 386.2 Q423.3 428.4 440.0 413.0Z" fill="#f8f4e4" stroke="#5f4322" stroke-width="2.0" stroke-linejoin="round"/><path d="M393.4 386.2 Q417.3 394.4 440.0 413.0" fill="none" stroke="#5f4322" stroke-width="1.8"/><path d="M450.0 404.0 Q429.1 351.5 403.7 357.0 Q409.1 409.5 450.0 404.0Z" fill="#f8f4e4" stroke="#5f4322" stroke-width="2.0" stroke-linejoin="round"/><path d="M450.0 404.0 Q409.1 409.5 403.7 357.0 Q423.1 385.5 450.0 404.0Z" fill="#acd1c5" stroke="#5f4322" stroke-width="2.0" stroke-linejoin="round"/><path d="M403.7 357.0 Q423.1 385.5 450.0 404.0" fill="none" stroke="#5f4322" stroke-width="1.8"/><path d="M460.0 392.0 Q460.5 343.7 439.0 340.6 Q414.5 383.7 460.0 392.0Z" fill="#f8f4e4" stroke="#5f4322" stroke-width="2.0" stroke-linejoin="round"/><path d="M460.0 392.0 Q414.5 383.7 439.0 340.6 Q444.5 369.7 460.0 392.0Z" fill="#acd1c5" stroke="#5f4322" stroke-width="2.0" stroke-linejoin="round"/><path d="M439.0 340.6 Q444.5 369.7 460.0 392.0" fill="none" stroke="#5f4322" stroke-width="1.8"/><path d="M468.0 375.0 Q521.1 341.1 489.7 326.9 Q447.1 367.1 468.0 375.0Z" fill="#f8f4e4" stroke="#5f4322" stroke-width="2.0" stroke-linejoin="round"/><path d="M489.7 326.9 Q477.1 349.1 468.0 375.0" fill="none" stroke="#5f4322" stroke-width="1.8"/><path d="M470.0 379.0 Q501.7 363.1 526.6 382.7 Q505.7 417.1 470.0 379.0Z" fill="#f8f4e4" stroke="#5f4322" stroke-width="2.0" stroke-linejoin="round"/><path d="M526.6 382.7 Q499.7 387.1 470.0 379.0" fill="none" stroke="#5f4322" stroke-width="1.8"/><path d="M458.7 404.2 Q498.1 440.1 517.1 419.7 Q481.1 393.1 458.7 404.2Z" fill="#f8f4e4" stroke="#5f4322" stroke-width="2.0" stroke-linejoin="round"/><path d="M458.7 404.2 Q498.1 440.1 517.1 419.7 Q488.1 414.1 458.7 404.2Z" fill="#acd1c5" stroke="#5f4322" stroke-width="2.0" stroke-linejoin="round"/><path d="M517.1 419.7 Q488.1 414.1 458.7 404.2" fill="none" stroke="#5f4322" stroke-width="1.8"/><path d="M442.0 422.0 Q489.5 431.0 479.0 464.0 Q443.5 457.0 442.0 422.0Z" fill="#f8f4e4" stroke="#5f4322" stroke-width="2.0" stroke-linejoin="round"/><path d="M442.0 422.0 Q489.5 431.0 479.0 464.0 Q463.5 443.0 442.0 422.0Z" fill="#acd1c5" stroke="#5f4322" stroke-width="2.0" stroke-linejoin="round"/><path d="M479.0 464.0 Q463.5 443.0 442.0 422.0" fill="none" stroke="#5f4322" stroke-width="1.8"/><path d="M414.2 458.9 C417.6 458.6 422.4 458.6 424.5 464.1 C426.6 469.5 427.1 483.5 426.6 491.5 C426.0 499.6 422.0 505.9 421.4 512.2 C420.8 518.5 422.4 524.5 422.8 529.3 C423.2 534.2 425.4 540.2 423.6 541.4 C421.9 542.5 415.8 541.1 412.5 536.2 C409.2 531.4 405.7 520.8 403.9 512.2 C402.0 503.6 401.3 492.4 401.3 484.7 C401.3 476.9 401.7 470.1 403.9 465.8 C406.0 461.5 410.8 459.2 414.2 458.9Z" fill="#f8f4e4" stroke="#5f4322" stroke-width="2.0" stroke-linejoin="round"/><path d="M414.2 458.9 C415.5 460.3 412.2 468.9 411.6 474.4 C411.0 479.8 410.7 484.4 410.8 491.5 C410.8 498.7 410.0 509.0 412.1 517.3 C414.3 525.6 423.6 538.2 423.6 541.4 C423.7 544.5 415.8 541.1 412.5 536.2 C409.2 531.4 405.7 520.8 403.9 512.2 C402.0 503.6 401.3 492.4 401.3 484.7 C401.3 476.9 401.7 470.1 403.9 465.8 C406.0 461.5 412.9 457.5 414.2 458.9Z" fill="#e8ddb0" stroke="#5f4322" stroke-width="1.4" stroke-linejoin="round"/><path d="M383.3 452.0 C386.4 448.9 392.4 450.3 397.0 450.3 C401.6 450.3 408.6 448.9 410.8 452.0 C412.9 455.2 410.8 464.5 410.1 469.2 C409.4 473.9 407.8 477.7 406.5 480.4 C405.1 483.0 404.0 484.0 402.2 485.0 C400.3 486.1 398.2 486.2 395.3 486.7 C392.4 487.3 388.2 488.1 385.0 488.1 C381.8 488.1 377.1 489.9 376.0 486.7 C375.0 483.6 377.3 475.0 378.5 469.2 C379.7 463.4 380.2 455.2 383.3 452.0Z" fill="#e8ddb0" stroke="#5f4322" stroke-width="2.0" stroke-linejoin="round"/><path d="M398.4 452.0 C398.0 455.2 397.8 465.1 396.2 470.9 C394.5 476.8 389.7 484.5 388.4 487.3" fill="none" stroke="#5f4322" stroke-width="1.4"/><path d="M396.2 488.1 Q360.5 486.4 340.3 525.9 Q370.8 538.0 396.2 488.1Z" fill="#c9a676" stroke="#5f4322" stroke-width="2.0" stroke-linejoin="round"/><path d="M340.3 525.9 Q370.8 511.0 396.2 488.1" fill="none" stroke="#5f4322" stroke-width="1.8"/><path d="M429.9 193.5 L430.0 194.1 L430.0 194.6 L429.8 195.2 L429.5 195.7 L429.2 196.2 L428.8 196.6 L428.4 197.1 L427.8 197.5 L427.0 197.7 L426.9 198.2 L427.3 198.9 L427.5 199.5 L427.6 200.1 L427.6 200.7 L427.5 201.3 L427.4 201.9 L427.2 202.4 L426.9 202.9 L426.5 203.3 L426.0 203.6 L425.5 203.8 L424.9 204.1 L424.3 204.2 L423.7 204.3 L423.0 204.2 L422.2 204.0 L422.2 204.8 L422.1 205.5 L421.8 206.0 L421.5 206.5 L421.1 206.9 L420.7 207.3 L420.3 207.7 L419.8 208.0 L419.3 208.1 L418.7 208.1 L418.2 208.1 L417.6 208.0 L417.1 207.9 L416.5 207.7 L415.9 207.4 L415.4 206.7 L415.0 207.3 L414.5 207.9 L414.0 208.3 L413.5 208.5 L412.9 208.7 L412.4 208.9 L411.8 209.0 L411.3 209.0 L410.7 208.9 L410.2 208.6 L409.7 208.3 L409.3 208.0 L408.9 207.6 L408.5 207.1 L408.2 206.5 L408.0 205.8 L407.6 205.5 L406.9 205.8 L406.3 205.9 L405.7 205.9 L405.1 205.8 L404.5 205.6 L404.0 205.4 L403.5 205.2 L403.1 204.8 L402.8 204.4 L402.5 203.9 L402.3 203.3 L402.1 202.8 L402.1 202.2 L402.1 201.6 L402.2 200.9 L402.6 200.1 L401.6 200.1 L400.9 199.9 L400.4 199.6 L399.9 199.2 L399.5 198.8 L399.1 198.3 L398.8 197.9 L398.6 197.3 L398.5 196.8 L398.6 196.2 L398.7 195.7 L398.8 195.1 L399.1 194.5 L399.4 194.0 L399.8 193.5 L400.5 193.0 L400.2 192.5 L399.6 192.0 L399.3 191.4 L399.0 190.9 L398.9 190.3 L398.8 189.7 L398.8 189.1 L398.8 188.6 L399.0 188.0 L399.3 187.6 L399.7 187.1 L400.1 186.7 L400.6 186.4 L401.1 186.1 L401.8 185.9 L402.5 185.8 L403.1 185.6 L402.9 184.9 L403.0 184.2 L403.1 183.7 L403.3 183.1 L403.5 182.6 L403.8 182.1 L404.1 181.7 L404.5 181.3 L405.0 181.1 L405.5 180.9 L406.0 180.7 L406.6 180.6 L407.1 180.6 L407.7 180.7 L408.4 180.8 L409.1 181.4 L409.3 180.5 L409.6 179.9 L410.0 179.5 L410.4 179.1 L410.9 178.8 L411.4 178.6 L411.9 178.3 L412.4 178.2 L412.9 178.2 L413.5 178.3 L414.0 178.4 L414.5 178.6 L415.0 178.9 L415.5 179.2 L416.0 179.6 L416.3 180.2 L416.9 180.0 L417.5 179.5 L418.1 179.2 L418.7 179.0 L419.3 179.0 L419.9 178.9 L420.5 179.0 L421.0 179.1 L421.5 179.3 L421.9 179.7 L422.3 180.2 L422.7 180.7 L422.9 181.2 L423.2 181.8 L423.3 182.4 L423.3 183.2 L423.3 183.8 L424.1 183.7 L424.8 183.8 L425.4 183.9 L425.9 184.2 L426.4 184.5 L426.9 184.8 L427.3 185.2 L427.6 185.6 L427.8 186.2 L427.9 186.7 L428.0 187.3 L428.0 187.9 L427.9 188.4 L427.8 189.0 L427.5 189.6 L426.8 190.3 L427.7 190.6 L428.3 191.0 L428.8 191.4 L429.2 191.9 L429.5 192.4 L429.7 193.0Z" fill="#acd1c5" stroke="#654826" stroke-width="1.2" stroke-linejoin="round"/><circle cx="414.0" cy="193.5" r="1.3" fill="#5f4322"/><path d="M351.8 227.0 L352.8 227.5 L353.3 228.0 L353.6 228.6 L353.9 229.1 L354.0 229.7 L354.1 230.3 L354.2 230.9 L354.1 231.4 L353.9 231.9 L353.6 232.4 L353.2 232.9 L352.8 233.3 L352.3 233.6 L351.7 233.9 L351.1 234.1 L350.2 234.2 L350.2 234.7 L350.4 235.5 L350.4 236.1 L350.3 236.7 L350.2 237.3 L349.9 237.9 L349.7 238.4 L349.4 238.8 L348.9 239.2 L348.4 239.5 L347.9 239.6 L347.3 239.8 L346.7 239.9 L346.1 239.8 L345.5 239.7 L344.8 239.4 L344.2 239.3 L344.0 240.2 L343.7 240.8 L343.3 241.3 L342.9 241.7 L342.5 242.0 L342.0 242.4 L341.5 242.6 L340.9 242.8 L340.4 242.7 L339.8 242.6 L339.2 242.4 L338.7 242.2 L338.2 241.9 L337.7 241.5 L337.2 241.0 L336.9 240.0 L336.3 240.7 L335.7 241.0 L335.1 241.3 L334.6 241.4 L334.0 241.4 L333.4 241.4 L332.9 241.4 L332.3 241.3 L331.9 241.0 L331.4 240.6 L331.1 240.2 L330.7 239.8 L330.4 239.3 L330.2 238.8 L330.0 238.1 L330.0 237.4 L329.5 237.2 L328.8 237.3 L328.1 237.2 L327.5 237.1 L327.0 236.8 L326.5 236.6 L326.0 236.2 L325.6 235.9 L325.3 235.4 L325.1 234.9 L325.0 234.3 L324.9 233.7 L324.9 233.1 L325.0 232.5 L325.2 231.9 L325.5 231.3 L325.8 230.7 L325.0 230.4 L324.4 230.0 L324.0 229.6 L323.6 229.1 L323.3 228.6 L323.1 228.1 L322.9 227.6 L322.8 227.0 L322.9 226.4 L323.1 225.9 L323.4 225.4 L323.6 224.9 L324.0 224.4 L324.4 224.0 L325.0 223.6 L325.9 223.3 L325.5 222.7 L325.1 222.1 L325.0 221.5 L324.9 220.9 L324.9 220.3 L325.0 219.7 L325.1 219.1 L325.3 218.6 L325.6 218.2 L326.0 217.8 L326.5 217.5 L327.0 217.2 L327.5 217.0 L328.1 216.8 L328.8 216.7 L329.6 216.8 L330.0 216.6 L330.0 215.9 L330.2 215.3 L330.4 214.8 L330.8 214.3 L331.1 213.8 L331.5 213.5 L331.9 213.1 L332.4 212.8 L332.9 212.7 L333.5 212.7 L334.0 212.7 L334.6 212.7 L335.2 212.8 L335.7 213.0 L336.3 213.4 L336.8 213.8 L337.2 212.9 L337.7 212.3 L338.2 211.9 L338.7 211.6 L339.2 211.4 L339.8 211.2 L340.4 211.0 L340.9 211.0 L341.5 211.2 L342.0 211.5 L342.5 211.8 L343.0 212.2 L343.4 212.6 L343.7 213.1 L344.0 213.8 L344.2 214.7 L344.7 214.7 L345.4 214.5 L346.0 214.4 L346.5 214.5 L347.1 214.6 L347.6 214.7 L348.1 214.9 L348.6 215.2 L349.0 215.6 L349.3 216.0 L349.6 216.5 L349.8 217.0 L350.0 217.5 L350.1 218.1 L350.1 218.7 L350.0 219.4 L350.1 219.9 L350.9 220.0 L351.4 220.2 L351.9 220.6 L352.3 220.9 L352.7 221.3 L353.1 221.8 L353.3 222.2 L353.5 222.7 L353.6 223.3 L353.6 223.8 L353.5 224.4 L353.4 224.9 L353.2 225.5 L352.9 226.0 L352.5 226.5Z" fill="#acd1c5" stroke="#654826" stroke-width="1.2" stroke-linejoin="round"/><circle cx="338.7" cy="227.0" r="1.3" fill="#5f4322"/><path d="M404.7 290.5 L404.4 291.0 L404.0 291.5 L403.5 292.0 L402.7 292.3 L403.2 292.9 L403.5 293.5 L403.8 294.1 L403.9 294.6 L404.0 295.2 L404.0 295.8 L403.9 296.3 L403.8 296.9 L403.5 297.4 L403.2 297.8 L402.8 298.2 L402.3 298.5 L401.8 298.8 L401.3 299.1 L400.7 299.2 L399.9 299.3 L399.7 299.6 L399.8 300.4 L399.7 301.1 L399.6 301.7 L399.3 302.2 L399.0 302.7 L398.7 303.2 L398.3 303.6 L397.9 303.9 L397.4 304.1 L396.8 304.2 L396.2 304.3 L395.7 304.3 L395.1 304.2 L394.4 304.1 L393.8 303.7 L393.2 303.3 L392.9 304.2 L392.5 304.8 L392.1 305.2 L391.6 305.6 L391.1 305.9 L390.6 306.1 L390.1 306.3 L389.5 306.4 L388.9 306.3 L388.4 306.1 L387.9 305.9 L387.4 305.6 L386.9 305.2 L386.5 304.8 L386.1 304.2 L385.8 303.4 L385.3 303.6 L384.6 303.8 L384.1 304.0 L383.5 304.0 L382.9 304.0 L382.4 303.9 L381.8 303.8 L381.3 303.6 L380.9 303.3 L380.5 302.9 L380.2 302.4 L379.9 302.0 L379.6 301.5 L379.4 300.9 L379.3 300.3 L379.4 299.6 L379.2 299.2 L378.4 299.1 L377.9 299.0 L377.3 298.7 L376.9 298.4 L376.4 298.0 L376.1 297.6 L375.7 297.2 L375.4 296.8 L375.3 296.2 L375.3 295.7 L375.2 295.1 L375.3 294.6 L375.4 294.0 L375.6 293.5 L375.9 292.9 L376.5 292.3 L375.5 292.0 L374.9 291.5 L374.5 291.0 L374.2 290.5 L373.9 290.0 L373.8 289.4 L373.6 288.8 L373.6 288.3 L373.8 287.7 L374.0 287.2 L374.3 286.7 L374.7 286.3 L375.1 285.8 L375.6 285.5 L376.3 285.2 L377.1 285.0 L377.2 284.5 L376.9 283.8 L376.9 283.2 L376.9 282.6 L377.0 282.1 L377.1 281.5 L377.3 281.0 L377.6 280.5 L377.9 280.1 L378.4 279.8 L378.9 279.5 L379.4 279.3 L379.9 279.1 L380.5 279.0 L381.1 279.0 L381.8 279.1 L382.4 279.1 L382.5 278.3 L382.7 277.7 L383.0 277.2 L383.4 276.8 L383.8 276.4 L384.2 276.1 L384.7 275.8 L385.2 275.5 L385.8 275.5 L386.3 275.5 L386.9 275.6 L387.4 275.7 L388.0 275.9 L388.5 276.2 L389.0 276.6 L389.5 277.4 L390.0 276.4 L390.5 275.9 L391.1 275.5 L391.6 275.3 L392.2 275.1 L392.8 275.0 L393.4 274.9 L394.0 274.9 L394.5 275.2 L395.0 275.5 L395.4 275.9 L395.8 276.3 L396.2 276.8 L396.5 277.4 L396.7 278.0 L396.7 278.9 L397.2 279.1 L397.9 278.9 L398.5 278.9 L399.1 279.0 L399.7 279.2 L400.2 279.4 L400.7 279.7 L401.2 280.0 L401.6 280.4 L401.8 280.9 L402.0 281.4 L402.2 282.0 L402.2 282.5 L402.3 283.1 L402.2 283.8 L401.9 284.4 L401.7 285.1 L402.6 285.2 L403.2 285.5 L403.7 285.9 L404.1 286.3 L404.4 286.8 L404.8 287.3 L405.0 287.8 L405.2 288.3 L405.1 288.9 L405.0 289.4 L404.9 290.0Z" fill="#acd1c5" stroke="#654826" stroke-width="1.2" stroke-linejoin="round"/><circle cx="389.5" cy="290.5" r="1.3" fill="#5f4322"/><path d="M471.9 308.0 L471.7 308.5 L471.3 309.0 L470.9 309.5 L470.2 309.9 L470.6 310.4 L471.0 311.0 L471.3 311.6 L471.4 312.1 L471.5 312.7 L471.5 313.3 L471.4 313.8 L471.3 314.4 L471.1 314.9 L470.7 315.3 L470.3 315.7 L469.9 316.0 L469.4 316.3 L468.8 316.6 L468.2 316.8 L467.5 316.8 L467.0 317.0 L467.1 317.8 L467.0 318.4 L466.9 319.0 L466.6 319.5 L466.3 320.0 L466.0 320.4 L465.6 320.8 L465.2 321.1 L464.7 321.3 L464.2 321.5 L463.6 321.6 L463.1 321.6 L462.5 321.6 L461.9 321.4 L461.3 321.2 L460.6 320.6 L460.4 321.5 L460.0 322.0 L459.5 322.4 L459.1 322.7 L458.6 323.0 L458.1 323.2 L457.5 323.3 L457.0 323.4 L456.5 323.4 L455.9 323.2 L455.4 323.0 L454.9 322.8 L454.5 322.4 L454.0 322.1 L453.6 321.6 L453.3 320.9 L452.7 321.1 L452.1 321.4 L451.5 321.6 L450.9 321.7 L450.3 321.7 L449.8 321.6 L449.2 321.5 L448.7 321.3 L448.2 321.0 L447.9 320.6 L447.5 320.1 L447.2 319.6 L447.0 319.1 L446.8 318.6 L446.7 317.9 L446.8 317.2 L446.6 316.7 L445.7 316.8 L445.0 316.7 L444.4 316.5 L443.9 316.2 L443.4 315.8 L443.0 315.5 L442.6 315.0 L442.3 314.6 L442.2 314.0 L442.1 313.4 L442.1 312.8 L442.2 312.2 L442.4 311.6 L442.7 311.0 L443.1 310.5 L444.0 309.8 L443.0 309.5 L442.5 309.0 L442.1 308.5 L441.7 308.0 L441.5 307.5 L441.3 306.9 L441.2 306.3 L441.1 305.8 L441.3 305.2 L441.5 304.7 L441.8 304.2 L442.2 303.8 L442.6 303.3 L443.1 303.0 L443.7 302.6 L444.5 302.5 L444.6 302.0 L444.3 301.2 L444.2 300.6 L444.2 300.0 L444.2 299.4 L444.4 298.8 L444.5 298.3 L444.8 297.7 L445.1 297.3 L445.6 297.0 L446.1 296.7 L446.7 296.5 L447.2 296.4 L447.8 296.3 L448.5 296.3 L449.2 296.5 L449.9 296.7 L450.0 295.9 L450.2 295.3 L450.5 294.8 L450.9 294.3 L451.3 293.9 L451.7 293.6 L452.2 293.3 L452.7 293.0 L453.3 293.0 L453.8 293.0 L454.4 293.1 L454.9 293.2 L455.5 293.4 L456.0 293.6 L456.5 294.0 L457.0 294.7 L457.5 294.1 L458.0 293.6 L458.5 293.3 L459.1 293.1 L459.7 292.9 L460.2 292.8 L460.8 292.8 L461.4 292.8 L461.9 293.0 L462.3 293.3 L462.8 293.7 L463.2 294.1 L463.6 294.5 L463.9 295.0 L464.1 295.6 L464.2 296.4 L464.6 296.7 L465.3 296.5 L466.0 296.5 L466.5 296.6 L467.1 296.8 L467.6 297.0 L468.1 297.3 L468.6 297.6 L468.9 298.0 L469.2 298.5 L469.4 299.0 L469.6 299.5 L469.7 300.1 L469.7 300.7 L469.6 301.3 L469.4 301.9 L469.1 302.6 L469.9 302.8 L470.5 303.1 L470.9 303.5 L471.3 303.9 L471.6 304.4 L471.9 304.8 L472.1 305.3 L472.3 305.8 L472.3 306.4 L472.2 306.9 L472.1 307.5Z" fill="#acd1c5" stroke="#654826" stroke-width="1.2" stroke-linejoin="round"/><circle cx="457.0" cy="308.0" r="1.3" fill="#5f4322"/><path d="M411.0 436.0 L410.9 436.6 L410.8 437.2 L410.5 437.8 L410.2 438.3 L409.9 438.9 L409.4 439.3 L408.9 439.8 L408.1 440.1 L408.1 440.7 L408.5 441.4 L408.6 442.0 L408.6 442.7 L408.6 443.3 L408.5 443.9 L408.4 444.5 L408.2 445.0 L407.8 445.5 L407.4 446.0 L406.9 446.3 L406.4 446.7 L405.9 446.9 L405.3 447.2 L404.6 447.3 L403.9 447.3 L403.3 447.5 L403.4 448.4 L403.3 449.2 L403.0 449.8 L402.7 450.4 L402.3 450.9 L401.9 451.4 L401.4 451.8 L400.9 452.2 L400.3 452.3 L399.6 452.3 L399.0 452.3 L398.4 452.2 L397.7 452.1 L397.1 451.8 L396.4 451.4 L395.7 450.5 L395.3 451.4 L394.8 452.0 L394.3 452.4 L393.7 452.7 L393.1 453.0 L392.5 453.2 L391.9 453.3 L391.3 453.3 L390.7 453.2 L390.1 452.9 L389.6 452.6 L389.1 452.2 L388.6 451.8 L388.1 451.3 L387.8 450.6 L387.6 449.8 L387.0 449.7 L386.2 450.1 L385.5 450.2 L384.8 450.3 L384.1 450.2 L383.5 450.0 L382.9 449.8 L382.3 449.6 L381.8 449.2 L381.5 448.7 L381.2 448.1 L380.9 447.5 L380.8 446.9 L380.7 446.2 L380.7 445.5 L380.9 444.6 L381.1 443.9 L380.2 443.8 L379.5 443.6 L378.9 443.2 L378.4 442.8 L378.0 442.4 L377.6 441.9 L377.2 441.4 L376.9 440.8 L376.9 440.2 L376.9 439.6 L377.0 438.9 L377.1 438.3 L377.4 437.7 L377.7 437.1 L378.1 436.5 L378.9 436.0 L378.2 435.5 L377.6 434.9 L377.2 434.3 L377.0 433.6 L376.8 433.0 L376.6 432.4 L376.6 431.7 L376.6 431.1 L376.8 430.5 L377.2 430.0 L377.6 429.5 L378.1 429.0 L378.6 428.6 L379.2 428.3 L379.9 428.0 L380.8 427.9 L381.2 427.6 L381.0 426.8 L381.0 426.1 L381.1 425.4 L381.3 424.8 L381.5 424.2 L381.8 423.7 L382.1 423.2 L382.6 422.7 L383.1 422.4 L383.7 422.2 L384.3 422.0 L384.9 421.9 L385.6 421.9 L386.2 422.0 L387.0 422.2 L387.7 422.5 L387.8 421.4 L388.1 420.7 L388.5 420.1 L389.0 419.6 L389.5 419.2 L390.1 418.9 L390.6 418.6 L391.2 418.4 L391.8 418.4 L392.5 418.5 L393.1 418.7 L393.7 419.0 L394.3 419.3 L394.8 419.7 L395.4 420.3 L395.8 421.2 L396.4 420.8 L397.0 420.2 L397.7 419.9 L398.4 419.7 L399.0 419.6 L399.7 419.6 L400.3 419.6 L400.9 419.7 L401.5 420.0 L402.0 420.4 L402.4 420.9 L402.8 421.4 L403.1 422.0 L403.4 422.7 L403.6 423.4 L403.6 424.3 L403.8 424.8 L404.7 424.7 L405.4 424.7 L406.0 424.9 L406.6 425.2 L407.2 425.5 L407.7 425.8 L408.2 426.2 L408.6 426.7 L408.8 427.3 L408.9 427.9 L409.0 428.5 L409.0 429.2 L408.9 429.8 L408.8 430.5 L408.5 431.2 L407.7 432.0 L408.7 432.3 L409.3 432.7 L409.8 433.2 L410.2 433.7 L410.5 434.2 L410.7 434.8 L410.9 435.4Z" fill="#acd1c5" stroke="#654826" stroke-width="1.2" stroke-linejoin="round"/><circle cx="393.7" cy="436.0" r="1.3" fill="#5f4322"/><path d="M442.3 449.0 L443.1 449.5 L443.7 450.0 L444.0 450.5 L444.3 451.1 L444.4 451.6 L444.5 452.2 L444.6 452.7 L444.5 453.3 L444.2 453.8 L443.8 454.2 L443.3 454.7 L442.8 455.0 L442.2 455.4 L441.5 455.7 L440.7 455.9 L439.5 455.8 L439.8 456.6 L439.9 457.2 L439.8 457.8 L439.7 458.3 L439.4 458.8 L439.2 459.3 L438.8 459.8 L438.4 460.2 L437.9 460.5 L437.3 460.8 L436.7 461.0 L436.0 461.1 L435.3 461.2 L434.6 461.2 L433.9 461.1 L433.0 460.9 L432.6 461.2 L432.3 461.9 L431.9 462.5 L431.5 462.9 L430.9 463.3 L430.4 463.7 L429.8 464.0 L429.1 464.2 L428.5 464.3 L427.8 464.2 L427.1 464.1 L426.5 464.0 L425.8 463.7 L425.2 463.4 L424.6 463.0 L424.0 462.5 L423.5 461.9 L422.8 462.5 L422.1 462.8 L421.4 463.0 L420.7 463.2 L420.0 463.2 L419.3 463.2 L418.7 463.1 L418.0 463.0 L417.4 462.7 L416.9 462.3 L416.5 461.9 L416.0 461.5 L415.7 461.0 L415.4 460.4 L415.2 459.8 L415.3 459.0 L414.5 459.0 L413.7 459.0 L413.0 458.9 L412.4 458.7 L411.8 458.4 L411.2 458.1 L410.7 457.8 L410.2 457.4 L409.8 457.0 L409.6 456.5 L409.5 455.9 L409.4 455.4 L409.4 454.9 L409.4 454.3 L409.6 453.7 L410.0 453.1 L409.8 452.7 L408.9 452.4 L408.3 452.0 L407.8 451.5 L407.4 451.1 L407.0 450.6 L406.8 450.1 L406.6 449.5 L406.5 449.0 L406.7 448.5 L406.9 447.9 L407.2 447.4 L407.6 446.9 L408.0 446.5 L408.5 446.1 L409.3 445.7 L410.3 445.4 L409.6 444.8 L409.4 444.2 L409.3 443.7 L409.2 443.1 L409.3 442.6 L409.4 442.0 L409.6 441.5 L409.8 441.0 L410.3 440.6 L410.7 440.3 L411.3 439.9 L411.9 439.7 L412.5 439.4 L413.2 439.2 L413.9 439.2 L414.9 439.3 L415.0 438.7 L415.0 438.0 L415.2 437.4 L415.6 436.9 L415.9 436.4 L416.4 435.9 L416.9 435.5 L417.4 435.2 L418.0 435.0 L418.7 434.9 L419.4 434.8 L420.1 434.9 L420.8 434.9 L421.5 435.1 L422.2 435.3 L422.9 435.8 L423.5 436.0 L424.0 435.4 L424.6 435.0 L425.2 434.7 L425.8 434.4 L426.4 434.2 L427.1 434.1 L427.8 434.0 L428.4 434.1 L429.1 434.2 L429.7 434.5 L430.2 434.7 L430.8 435.1 L431.3 435.4 L431.8 435.9 L432.1 436.4 L432.3 437.4 L433.2 436.8 L434.0 436.7 L434.7 436.6 L435.4 436.7 L436.1 436.8 L436.7 437.0 L437.4 437.2 L437.9 437.4 L438.4 437.8 L438.8 438.3 L439.1 438.7 L439.4 439.2 L439.6 439.8 L439.7 440.3 L439.7 440.9 L439.4 441.6 L440.0 441.9 L440.8 442.1 L441.5 442.3 L442.1 442.7 L442.6 443.0 L443.0 443.4 L443.4 443.9 L443.8 444.3 L444.0 444.8 L444.0 445.4 L444.0 445.9 L443.9 446.4 L443.7 447.0 L443.5 447.5 L443.1 448.0 L442.6 448.5Z" fill="#acd1c5" stroke="#654826" stroke-width="1.2" stroke-linejoin="round"/><circle cx="425.8" cy="449.0" r="1.3" fill="#5f4322"/><path d="M433.4 421.6 L433.0 422.2 L433.9 422.8 L434.4 423.5 L434.8 424.2 L435.1 424.9 L435.2 425.6 L435.3 426.3 L435.4 427.1 L435.3 427.8 L434.9 428.4 L434.5 428.9 L433.9 429.5 L433.4 429.9 L432.7 430.3 L432.0 430.7 L431.1 430.9 L429.8 430.7 L430.3 431.8 L430.4 432.6 L430.4 433.4 L430.3 434.2 L430.0 434.9 L429.7 435.5 L429.4 436.1 L429.0 436.7 L428.4 437.1 L427.7 437.4 L427.1 437.6 L426.3 437.7 L425.6 437.7 L424.8 437.7 L424.0 437.5 L423.2 437.0 L422.7 437.4 L422.4 438.3 L422.0 439.1 L421.5 439.7 L420.9 440.2 L420.3 440.6 L419.7 441.0 L419.1 441.3 L418.4 441.4 L417.7 441.3 L417.0 441.1 L416.3 440.8 L415.6 440.5 L415.0 440.0 L414.4 439.5 L413.9 438.7 L413.5 437.8 L412.7 438.4 L412.0 438.8 L411.3 438.9 L410.6 439.0 L409.9 439.1 L409.3 439.0 L408.6 438.9 L408.0 438.7 L407.4 438.3 L406.9 437.9 L406.5 437.3 L406.1 436.8 L405.7 436.2 L405.4 435.5 L405.2 434.8 L405.3 433.8 L404.4 433.9 L403.5 433.9 L402.8 433.8 L402.1 433.5 L401.4 433.2 L400.9 432.8 L400.3 432.4 L399.8 431.9 L399.5 431.3 L399.3 430.6 L399.2 429.9 L399.2 429.2 L399.2 428.5 L399.3 427.8 L399.6 427.0 L400.1 426.3 L399.9 425.7 L398.9 425.3 L398.2 424.8 L397.7 424.2 L397.3 423.6 L396.9 423.0 L396.6 422.3 L396.4 421.6 L396.4 420.9 L396.6 420.2 L396.9 419.6 L397.2 418.9 L397.7 418.3 L398.2 417.7 L398.8 417.2 L399.6 416.8 L400.8 416.6 L400.0 415.7 L399.6 414.9 L399.5 414.1 L399.4 413.4 L399.5 412.6 L399.6 411.9 L399.8 411.3 L400.0 410.6 L400.5 410.1 L401.0 409.7 L401.7 409.3 L402.3 409.0 L403.0 408.8 L403.7 408.6 L404.6 408.6 L405.6 408.9 L405.7 408.1 L405.8 407.1 L406.0 406.3 L406.3 405.6 L406.7 405.0 L407.2 404.4 L407.7 403.9 L408.2 403.5 L408.9 403.2 L409.6 403.1 L410.3 403.1 L411.0 403.2 L411.8 403.4 L412.5 403.6 L413.2 404.0 L413.9 404.7 L414.6 405.1 L415.1 404.3 L415.7 403.8 L416.3 403.4 L416.9 403.2 L417.6 403.0 L418.3 402.8 L418.9 402.8 L419.6 402.8 L420.2 403.0 L420.9 403.3 L421.4 403.7 L422.0 404.2 L422.5 404.7 L422.9 405.2 L423.3 406.0 L423.3 407.2 L424.4 406.3 L425.3 406.0 L426.1 406.0 L426.8 406.0 L427.5 406.1 L428.2 406.3 L428.9 406.6 L429.5 406.9 L429.9 407.5 L430.3 408.1 L430.6 408.7 L430.8 409.4 L430.9 410.2 L431.0 410.9 L430.9 411.8 L430.5 412.7 L431.1 413.1 L432.0 413.2 L432.8 413.6 L433.4 414.0 L434.0 414.5 L434.5 415.0 L434.9 415.6 L435.3 416.2 L435.5 416.8 L435.5 417.5 L435.4 418.2 L435.2 418.9 L435.0 419.6 L434.6 420.3 L434.1 421.0Z" fill="#acd1c5" stroke="#654826" stroke-width="1.2" stroke-linejoin="round"/><circle cx="416.3" cy="421.6" r="1.3" fill="#5f4322"/><path d="M338.9 476.3 L338.6 476.8 L338.2 477.3 L337.8 477.8 L337.1 478.2 L336.5 478.6 L337.0 479.2 L337.3 479.7 L337.5 480.3 L337.5 480.9 L337.5 481.4 L337.5 482.0 L337.4 482.5 L337.2 483.0 L336.9 483.4 L336.6 483.8 L336.1 484.2 L335.7 484.5 L335.2 484.8 L334.7 485.0 L334.0 485.1 L333.2 485.0 L333.4 485.9 L333.5 486.6 L333.3 487.2 L333.1 487.8 L332.9 488.3 L332.6 488.8 L332.2 489.3 L331.8 489.7 L331.3 489.9 L330.8 490.0 L330.2 490.1 L329.7 490.1 L329.1 490.1 L328.5 490.0 L327.9 489.7 L327.2 489.2 L326.8 489.3 L326.4 489.9 L326.0 490.4 L325.5 490.7 L325.0 491.0 L324.5 491.2 L324.0 491.4 L323.5 491.5 L323.0 491.5 L322.4 491.4 L321.9 491.2 L321.4 491.0 L321.0 490.7 L320.5 490.3 L320.1 489.9 L319.8 489.4 L319.4 488.8 L318.8 489.3 L318.2 489.5 L317.6 489.6 L317.0 489.6 L316.5 489.5 L315.9 489.4 L315.4 489.3 L314.9 489.1 L314.5 488.7 L314.2 488.3 L313.9 487.8 L313.6 487.3 L313.4 486.8 L313.3 486.2 L313.2 485.6 L313.4 484.7 L312.6 484.8 L311.8 484.8 L311.2 484.6 L310.6 484.3 L310.1 484.0 L309.7 483.6 L309.3 483.2 L308.9 482.8 L308.7 482.3 L308.7 481.7 L308.7 481.1 L308.7 480.5 L308.9 479.9 L309.1 479.4 L309.4 478.8 L310.0 478.2 L310.2 477.7 L309.6 477.3 L309.2 476.8 L308.9 476.3 L308.7 475.8 L308.5 475.3 L308.4 474.7 L308.3 474.2 L308.4 473.6 L308.6 473.1 L308.8 472.6 L309.2 472.2 L309.5 471.8 L309.9 471.4 L310.4 471.0 L311.0 470.7 L311.7 470.6 L311.2 469.8 L311.0 469.1 L311.0 468.5 L311.0 467.9 L311.2 467.3 L311.3 466.8 L311.5 466.3 L311.8 465.8 L312.3 465.4 L312.7 465.2 L313.3 464.9 L313.8 464.8 L314.4 464.6 L315.0 464.6 L315.7 464.7 L316.5 465.0 L316.7 464.5 L316.9 463.8 L317.1 463.2 L317.5 462.8 L317.9 462.3 L318.3 462.0 L318.7 461.6 L319.2 461.4 L319.7 461.2 L320.3 461.2 L320.9 461.3 L321.4 461.4 L322.0 461.6 L322.5 461.8 L323.0 462.2 L323.5 462.7 L324.0 462.9 L324.5 462.3 L325.0 462.0 L325.5 461.7 L326.1 461.6 L326.7 461.4 L327.2 461.4 L327.8 461.4 L328.3 461.5 L328.8 461.8 L329.2 462.1 L329.6 462.5 L330.0 462.9 L330.4 463.4 L330.6 463.9 L330.8 464.6 L330.7 465.6 L331.6 465.1 L332.3 465.0 L332.9 465.1 L333.5 465.2 L334.0 465.4 L334.5 465.7 L335.0 465.9 L335.4 466.3 L335.7 466.7 L335.9 467.3 L336.1 467.8 L336.2 468.4 L336.3 468.9 L336.2 469.5 L336.1 470.2 L335.7 470.9 L336.2 471.2 L337.0 471.4 L337.5 471.7 L338.0 472.1 L338.4 472.6 L338.8 473.1 L339.0 473.6 L339.3 474.1 L339.3 474.6 L339.3 475.2 L339.1 475.8Z" fill="#acd1c5" stroke="#654826" stroke-width="1.2" stroke-linejoin="round"/><circle cx="323.5" cy="476.3" r="1.3" fill="#5f4322"/><path d="M459.3 476.9 L459.3 477.4 L459.2 478.0 L459.0 478.5 L458.7 479.0 L458.5 479.4 L458.1 479.9 L457.7 480.3 L457.1 480.7 L456.4 480.9 L457.1 481.7 L457.4 482.3 L457.6 482.9 L457.6 483.5 L457.6 484.1 L457.5 484.7 L457.4 485.3 L457.2 485.8 L456.8 486.2 L456.3 486.5 L455.8 486.8 L455.3 487.1 L454.7 487.3 L454.1 487.4 L453.4 487.4 L452.6 487.1 L452.3 487.5 L452.2 488.2 L452.0 488.7 L451.7 489.2 L451.4 489.7 L451.0 490.1 L450.6 490.4 L450.2 490.8 L449.7 491.0 L449.2 491.1 L448.6 491.1 L448.1 491.1 L447.5 491.0 L447.0 490.9 L446.4 490.6 L445.9 490.3 L445.4 490.2 L445.0 490.9 L444.5 491.3 L444.0 491.6 L443.5 491.9 L442.9 492.1 L442.4 492.2 L441.8 492.3 L441.3 492.3 L440.8 492.0 L440.3 491.8 L439.8 491.5 L439.4 491.1 L439.0 490.7 L438.6 490.2 L438.4 489.5 L438.3 488.5 L437.5 489.2 L436.8 489.4 L436.1 489.5 L435.5 489.5 L434.9 489.4 L434.4 489.2 L433.9 489.0 L433.4 488.7 L433.0 488.3 L432.7 487.8 L432.5 487.3 L432.3 486.7 L432.2 486.1 L432.2 485.5 L432.3 484.8 L432.6 484.0 L432.3 483.6 L431.7 483.5 L431.1 483.2 L430.7 482.8 L430.3 482.4 L429.9 482.0 L429.6 481.6 L429.4 481.1 L429.2 480.6 L429.2 480.0 L429.2 479.5 L429.3 479.0 L429.5 478.4 L429.7 477.9 L430.0 477.4 L430.4 476.9 L430.8 476.4 L430.1 475.9 L429.7 475.4 L429.4 474.8 L429.2 474.3 L429.1 473.7 L429.0 473.2 L429.0 472.6 L429.1 472.1 L429.4 471.6 L429.7 471.1 L430.1 470.7 L430.5 470.3 L431.0 470.0 L431.6 469.7 L432.2 469.5 L433.1 469.6 L432.9 468.8 L432.7 468.1 L432.8 467.5 L432.9 466.9 L433.1 466.3 L433.3 465.8 L433.6 465.3 L433.9 464.9 L434.4 464.6 L434.9 464.4 L435.4 464.2 L436.0 464.1 L436.6 464.0 L437.2 464.1 L437.8 464.2 L438.5 464.6 L439.0 464.5 L439.2 463.8 L439.6 463.3 L440.0 462.9 L440.4 462.6 L440.9 462.3 L441.4 462.1 L441.9 461.9 L442.4 461.8 L442.9 461.8 L443.5 461.9 L444.0 462.1 L444.5 462.3 L445.0 462.6 L445.5 462.9 L445.9 463.4 L446.3 464.0 L446.9 463.3 L447.5 463.0 L448.0 462.9 L448.6 462.8 L449.2 462.7 L449.7 462.7 L450.3 462.8 L450.8 463.0 L451.2 463.3 L451.6 463.7 L452.0 464.1 L452.3 464.6 L452.6 465.1 L452.8 465.6 L452.9 466.3 L452.8 467.1 L453.5 467.1 L454.2 467.1 L454.8 467.2 L455.3 467.4 L455.8 467.7 L456.3 468.0 L456.7 468.3 L457.1 468.7 L457.4 469.2 L457.5 469.7 L457.6 470.3 L457.7 470.8 L457.7 471.4 L457.6 472.0 L457.4 472.6 L457.0 473.2 L457.0 473.7 L457.6 474.0 L458.1 474.4 L458.4 474.9 L458.7 475.4 L458.9 475.9 L459.1 476.4Z" fill="#acd1c5" stroke="#654826" stroke-width="1.2" stroke-linejoin="round"/><circle cx="444.0" cy="476.9" r="1.3" fill="#5f4322"/></svg>
<div class="a" style="left:776px;top:100px;width:23px;height:2px;background:#3d3d3d;"></div>
<div class="a" style="left:776px;top:143px;width:23px;height:2px;background:#3d3d3d;"></div>
<div class="a" style="left:776px;top:205px;width:23px;height:2px;background:#3d3d3d;"></div>
<div class="a" style="left:776px;top:265px;width:23px;height:2px;background:#3d3d3d;"></div>
<div class="a" style="left:776px;top:291px;width:23px;height:2px;background:#3d3d3d;"></div>
<div class="a" style="left:776px;top:353px;width:23px;height:2px;background:#3d3d3d;"></div>
<div class="a" style="left:776px;top:411px;width:23px;height:2px;background:#3d3d3d;"></div>
<svg class="a" style="left:783px;top:60px;" width="10" height="2" viewBox="0 0 10 2"><path d="M0 1 H10" stroke="#3c3c3c" stroke-width="1.2" stroke-dasharray="1 1"/></svg>
<svg class="a" style="left:783px;top:104px;" width="10" height="2" viewBox="0 0 10 2"><path d="M0 1 H10" stroke="#3c3c3c" stroke-width="1.2" stroke-dasharray="1 1"/></svg>
<svg class="a" style="left:783px;top:147px;" width="10" height="2" viewBox="0 0 10 2"><path d="M0 1 H10" stroke="#3c3c3c" stroke-width="1.2" stroke-dasharray="1 1"/></svg>
<svg class="a" style="left:783px;top:209px;" width="10" height="2" viewBox="0 0 10 2"><path d="M0 1 H10" stroke="#3c3c3c" stroke-width="1.2" stroke-dasharray="1 1"/></svg>
<svg class="a" style="left:783px;top:268px;" width="10" height="2" viewBox="0 0 10 2"><path d="M0 1 H10" stroke="#3c3c3c" stroke-width="1.2" stroke-dasharray="1 1"/></svg>
<svg class="a" style="left:783px;top:295px;" width="10" height="2" viewBox="0 0 10 2"><path d="M0 1 H10" stroke="#3c3c3c" stroke-width="1.2" stroke-dasharray="1 1"/></svg>
<svg class="a" style="left:783px;top:357px;" width="10" height="2" viewBox="0 0 10 2"><path d="M0 1 H10" stroke="#3c3c3c" stroke-width="1.2" stroke-dasharray="1 1"/></svg>
<svg class="a" style="left:0;top:0" width="960" height="640" viewBox="0 0 960 640"><path d="M782 74 Q781 68 788 68 Q795 68 794 72 Q793 74 791 74 Q789 74 790 76 Q786 78 782 74Z" fill="#e2e2e2"/><circle cx="785" cy="72" r="1" fill="#535353"/><circle cx="788" cy="70.5" r="1" fill="#535353"/><circle cx="791" cy="71" r="1" fill="#535353"/><circle cx="785.5" cy="75" r="1" fill="#535353"/><defs><linearGradient id="rg1" x1="0" y1="0" x2="1" y2="1"><stop offset="0" stop-color="#222"/><stop offset="1" stop-color="#fff"/></linearGradient></defs><path d="M783 83 Q792 84 794 94 L783 94Z" fill="url(#rg1)" stroke="#e2e2e2" stroke-width="0.8"/><circle cx="788" cy="116" r="3.6" fill="#d8d8d8"/><circle cx="788" cy="116" r="5.4" fill="none" stroke="#cfcfcf" stroke-width="0.9" stroke-dasharray="1 1"/><rect x="786" y="128" width="8" height="8" fill="none" stroke="#e2e2e2" stroke-width="1"/><circle cx="785" cy="136" r="2.6" fill="#535353" stroke="#e2e2e2" stroke-width="1"/><text x="782" y="164" font-family="Liberation Sans" font-size="11" fill="#e2e2e2">A</text><rect x="791.5" y="152" width="1" height="12" fill="#e2e2e2"/><text x="783.5" y="182" font-family="Liberation Sans" font-size="11" font-weight="bold" fill="#e2e2e2">¶</text><ellipse cx="788" cy="195" rx="3" ry="5" transform="rotate(15 788 195)" fill="none" stroke="#e2e2e2" stroke-width="1.3"/><rect x="783" y="215" width="9.5" height="9.5" fill="none" stroke="#e2e2e2" stroke-width="1" stroke-dasharray="1.5 1"/><rect x="783" y="233" width="1.2" height="11" fill="#e2e2e2"/><rect x="785" y="234" width="6" height="3.5" fill="#e2e2e2"/><rect x="785" y="239" width="9" height="3.5" fill="#e2e2e2"/><rect x="782.5" y="249.5" width="6.5" height="6.5" fill="#e2e2e2"/><rect x="787" y="253" width="6.5" height="6.5" fill="#535353" stroke="#e2e2e2" stroke-width="1"/><path d="M782 278 L788 275 L794 278 L788 281Z" fill="#e2e2e2"/><path d="M782 281.5 L788 284.5 L794 281.5" stroke="#e2e2e2" stroke-width="1.3" fill="none"/><rect x="782" y="302" width="12" height="1.3" fill="#e2e2e2"/><rect x="782" y="305.5" width="12" height="1.3" fill="#e2e2e2"/><rect x="782" y="309" width="12" height="1.3" fill="#e2e2e2"/><defs><linearGradient id="rg2" x1="0" x2="1"><stop offset="0" stop-color="#222"/><stop offset="1" stop-color="#f2f2f2"/></linearGradient></defs><rect x="782.5" y="320" width="11" height="8.5" fill="url(#rg2)" stroke="#e2e2e2" stroke-width="0.8"/><circle cx="786.5" cy="341" r="4" fill="#aaa" stroke="#ccc" stroke-width="0.8"/><circle cx="789.5" cy="344" r="4" fill="#8a8a8a" stroke="#ccc" stroke-width="0.8"/><rect x="782" y="364" width="12" height="9" fill="none" stroke="#e2e2e2" stroke-width="1"/><path d="M788 364 V373 M782 368.5 H794" stroke="#e2e2e2" stroke-width="1"/><rect x="783.5" y="365.5" width="3" height="2" fill="#e2e2e2"/><rect x="789.5" y="369.5" width="3" height="2" fill="#e2e2e2"/><rect x="778" y="379" width="20" height="14" fill="#2e2e2e"/><rect x="784" y="386" width="7" height="5.5" fill="#e2e2e2"/><path d="M785 386 L784 380.5 M787.5 386 L788 380 M790 386 L792 382" stroke="#e2e2e2" stroke-width="1.1"/><circle cx="788" cy="400" r="2.6" fill="#e2e2e2"/><circle cx="785.2" cy="404" r="2.6" fill="#e2e2e2"/><circle cx="790.8" cy="404" r="2.6" fill="#e2e2e2"/><path d="M788 403 L786 408 H790Z" fill="#e2e2e2"/></svg>
<div class="a" style="left:801px;top:57px;width:157px;height:18px;background:#454545;"></div>
<div class="a" style="left:801px;top:57px;width:41px;height:18px;background:#535353;"></div>
<div class="a" style="left:842px;top:57px;width:1px;height:18px;background:#3d3d3d;"></div>
<div class="a" style="left:873px;top:57px;width:1px;height:18px;background:#3d3d3d;"></div>
<div class="a" style="left:904px;top:57px;width:1px;height:18px;background:#3d3d3d;"></div>
<div class="a" style="left:933px;top:57px;width:1px;height:18px;background:#3d3d3d;"></div>
<div class="t" style="left:807.00px;top:62.57px;font-size:7.6px;line-height:7.6px;color:#f4f4f4;font-weight:bold;transform:scaleX(0.771);">Properties</div>
<div class="t" style="left:848.00px;top:62.91px;font-size:7.2px;line-height:7.2px;color:#c8c8c8;-webkit-text-stroke:0.25px;transform:scaleX(0.887);">Libraries</div>
<div class="t" style="left:878.00px;top:62.91px;font-size:7.2px;line-height:7.2px;color:#c8c8c8;-webkit-text-stroke:0.25px;transform:scaleX(0.774);">Asset Ex</div>
<div class="t" style="left:908.50px;top:62.91px;font-size:7.2px;line-height:7.2px;color:#c8c8c8;-webkit-text-stroke:0.25px;transform:scaleX(0.887);">Artboard</div>
<div class="a" style="left:930px;top:60px;width:4px;height:12px;background:#454545;"></div>
<div class="t" style="left:806.60px;top:82.41px;font-size:7.2px;line-height:7.2px;color:#dcdcdc;-webkit-text-stroke:0.25px;transform:scaleX(0.865);">No Selection</div>
<div class="a" style="left:904px;top:79px;width:48px;height:13px;background:#4f4f4f;border:1px solid #6e6e6e;border-radius:3px;"></div>
<div class="t" style="left:910.50px;top:82.41px;font-size:7.2px;line-height:7.2px;color:#f0f0f0;-webkit-text-stroke:0.25px;transform:scaleX(0.899);">Tool Options</div>
<div class="a" style="left:801px;top:95px;width:157px;height:1px;background:#444444;"></div>
<div class="t" style="left:806.60px;top:102.21px;font-size:7.2px;line-height:7.2px;color:#dcdcdc;-webkit-text-stroke:0.25px;transform:scaleX(0.873);">Transform</div>
<svg class="a" style="left:0;top:0" width="960" height="640" viewBox="0 0 960 640"><g fill="none" stroke="#e0e0e0" stroke-width="0.9"><circle cx="808.5" cy="125.5" r="1.6"/><circle cx="813.5" cy="125.5" r="1.6"/><circle cx="818.5" cy="125.5" r="1.6"/><circle cx="808.5" cy="130.5" r="1.6"/><circle cx="818.5" cy="130.5" r="1.6"/><circle cx="808.5" cy="135.5" r="1.6"/><circle cx="813.5" cy="135.5" r="1.6"/><circle cx="818.5" cy="135.5" r="1.6"/><path d="M810 125.5 H812 M815 125.5 H817 M810 135.5 H812 M815 135.5 H817 M808.5 127 V129 M808.5 132 V134 M818.5 127 V129 M818.5 132 V134"/></g><rect x="812" y="129" width="3" height="3" fill="#fff"/><g fill="none" stroke="#e0e0e0" stroke-width="1.1"><path d="M938.5 129.5 L936 126.5 Q935 124.5 937 123.5 Q938.5 123 939.5 124.5 L941 126.5"/><path d="M940.5 131 L943 134 Q944 136 942 136.8 Q940.5 137.2 939.5 135.8 L938 134"/><path d="M935 126 L944.5 135.5"/></g><path d="M825.5 156.5 H834 M825.5 156.5 L832 150" stroke="#e0e0e0" stroke-width="1" fill="none"/><path d="M829 156 Q829.5 153.5 828 152.5" stroke="#e0e0e0" stroke-width="0.8" fill="none"/><path d="M895 151 V159 L899 155Z M903 151 V159 L899.5 155Z" fill="none" stroke="#e0e0e0" stroke-width="0.9"/><path d="M899 150 V160" stroke="#e0e0e0" stroke-width="0.6"/><path d="M914 151 H922 L918 155Z" fill="#e0e0e0"/><path d="M914 159 H922 L918 155Z" fill="none" stroke="#e0e0e0" stroke-width="0.9"/><path d="M913 155 H923" stroke="#e0e0e0" stroke-width="0.6"/><circle cx="942.5" cy="168.5" r="0.95" fill="#e4e4e4"/><circle cx="945.8" cy="168.5" r="0.95" fill="#e4e4e4"/><circle cx="949.1" cy="168.5" r="0.95" fill="#e4e4e4"/><circle cx="942.5" cy="274.5" r="0.95" fill="#e4e4e4"/><circle cx="945.8" cy="274.5" r="0.95" fill="#e4e4e4"/><circle cx="949.1" cy="274.5" r="0.95" fill="#e4e4e4"/></svg>
<div class="a" style="left:837px;top:116px;width:34px;height:12px;background:#4d4d4d;border:1px solid #575757;"></div>
<div class="t" style="left:828.00px;top:118.91px;font-size:7.2px;line-height:7.2px;color:#d8d8d8;-webkit-text-stroke:0.25px;transform:scaleX(0.882);">X:</div>
<div class="t" style="left:840.00px;top:118.91px;font-size:7.2px;line-height:7.2px;color:#6c6c6c;-webkit-text-stroke:0.25px;transform:scaleX(0.955);">0 px</div>
<div class="a" style="left:837px;top:132px;width:34px;height:12px;background:#4d4d4d;border:1px solid #575757;"></div>
<div class="t" style="left:829.00px;top:134.91px;font-size:7.2px;line-height:7.2px;color:#d8d8d8;-webkit-text-stroke:0.25px;transform:scaleX(0.937);">Y:</div>
<div class="t" style="left:840.00px;top:134.91px;font-size:7.2px;line-height:7.2px;color:#6c6c6c;-webkit-text-stroke:0.25px;transform:scaleX(0.955);">0 px</div>
<div class="a" style="left:891px;top:116px;width:34px;height:12px;background:#4d4d4d;border:1px solid #575757;"></div>
<div class="t" style="left:881.00px;top:118.91px;font-size:7.2px;line-height:7.2px;color:#d8d8d8;-webkit-text-stroke:0.25px;transform:scaleX(0.692);">W:</div>
<div class="t" style="left:894.00px;top:118.91px;font-size:7.2px;line-height:7.2px;color:#6c6c6c;-webkit-text-stroke:0.25px;transform:scaleX(0.955);">0 px</div>
<div class="a" style="left:891px;top:132px;width:34px;height:12px;background:#4d4d4d;border:1px solid #575757;"></div>
<div class="t" style="left:882.00px;top:134.91px;font-size:7.2px;line-height:7.2px;color:#d8d8d8;-webkit-text-stroke:0.25px;transform:scaleX(0.833);">H:</div>
<div class="t" style="left:894.00px;top:134.91px;font-size:7.2px;line-height:7.2px;color:#6c6c6c;-webkit-text-stroke:0.25px;transform:scaleX(0.955);">0 px</div>
<div class="a" style="left:836px;top:149px;width:35px;height:12px;background:#4d4d4d;border:1px solid #575757;"></div>
<div class="t" style="left:839.00px;top:151.91px;font-size:7.2px;line-height:7.2px;color:#6c6c6c;-webkit-text-stroke:0.25px;transform:scaleX(0.872);">0°</div>
<svg class="a" style="left:864px;top:153px;" width="6" height="4" viewBox="0 0 6 4"><path d="M0.5 0.5 L3 3 L5.5 0.5" stroke="#6c6c6c" stroke-width="1" fill="none"/></svg>
<div class="t" style="left:834.00px;top:152.07px;font-size:7px;line-height:7px;color:#d8d8d8;-webkit-text-stroke:0.25px;transform:scaleX(1.028);">:</div>
<div class="a" style="left:801px;top:176px;width:157px;height:1px;background:#444444;"></div>
<div class="t" style="left:806.60px;top:184.41px;font-size:7.2px;line-height:7.2px;color:#dcdcdc;-webkit-text-stroke:0.25px;transform:scaleX(0.837);">Appearance</div>
<div class="a" style="left:807px;top:199px;width:11px;height:11px;background:#ffffff;border:1px solid #2e2e2e;border-radius:1px;"></div>
<div class="t" style="left:826.00px;top:201.41px;font-size:7.2px;line-height:7.2px;color:#cfcfcf;-webkit-text-stroke:0.25px;transform:scaleX(0.870);">Fill</div>
<div class="a" style="left:807px;top:217px;width:11px;height:11px;background:#ffffff;border:1px solid #2e2e2e;border-radius:1px;"></div>
<svg class="a" style="left:807px;top:217px;" width="11" height="11" viewBox="0 0 11 11"><rect x="3" y="3" width="5" height="5" fill="#222"/><path d="M1 10 L10 1" stroke="#f00" stroke-width="1.4"/></svg>
<div class="t" style="left:826.00px;top:218.91px;font-size:7.2px;line-height:7.2px;color:#f2f2f2;-webkit-text-stroke:0.25px;transform:scaleX(0.841);">Stroke</div>
<div class="a" style="left:826px;top:226px;width:18px;height:1px;border-bottom:1px dotted #8c8c8c;"></div>
<div class="a" style="left:853px;top:216px;width:10px;height:13px;background:#4a4a4a;border-radius:2px;"></div>
<svg class="a" style="left:854px;top:217px;" width="8" height="11" viewBox="0 0 8 11"><path d="M1.5 3.5 L4 1 L6.5 3.5 M1.5 7.5 L4 10 L6.5 7.5" stroke="#e0e0e0" stroke-width="1.1" fill="none"/></svg>
<div class="a" style="left:864px;top:216px;width:20px;height:13px;background:#474747;"></div>
<div class="a" style="left:885px;top:216px;width:11px;height:13px;background:#4a4a4a;border-radius:2px;"></div>
<svg class="a" style="left:887px;top:220px;" width="7" height="5" viewBox="0 0 7 5"><path d="M1 1 L3.5 3.5 L6 1" stroke="#e6e6e6" stroke-width="1.3" fill="none"/></svg>
<div class="a" style="left:807px;top:236px;width:11px;height:11px;border:1px solid #777;background:#5a5a5a;"></div>
<svg class="a" style="left:808px;top:237px;" width="9" height="9" viewBox="0 0 9 9"><path d="M0 0 L9 9 M9 0 L0 9" stroke="#6a6a6a" stroke-width="1.5"/></svg>
<div class="t" style="left:826.00px;top:237.91px;font-size:7.2px;line-height:7.2px;color:#f2f2f2;-webkit-text-stroke:0.25px;transform:scaleX(0.860);">Opacity</div>
<div class="a" style="left:826px;top:245px;width:21px;height:1px;border-bottom:1px dotted #8c8c8c;"></div>
<div class="a" style="left:853px;top:235px;width:31px;height:13px;background:#474747;"></div>
<div class="t" style="left:855.50px;top:237.91px;font-size:7.2px;line-height:7.2px;color:#e6e6e6;-webkit-text-stroke:0.25px;transform:scaleX(0.815);">100%</div>
<div class="a" style="left:885px;top:235px;width:11px;height:13px;background:#4a4a4a;border-radius:2px;"></div>
<svg class="a" style="left:888px;top:238px;" width="6" height="8" viewBox="0 0 6 8"><path d="M1.5 1 L4.5 4 L1.5 7" stroke="#e6e6e6" stroke-width="1.3" fill="none"/></svg>
<div class="t" style="left:811.00px;top:255.38px;font-size:9px;line-height:9px;color:#d4d4d4;-webkit-text-stroke:0.25px;transform:scaleX(1.000);font-style:italic;font-family:'Liberation Serif',serif;">fx.</div>
<div class="a" style="left:801px;top:282px;width:157px;height:1px;background:#444444;"></div>
<div class="t" style="left:807.00px;top:294.91px;font-size:7.2px;line-height:7.2px;color:#b9c3cc;-webkit-text-stroke:0.25px;transform:scaleX(0.851);">Brush</div>
<div class="a" style="left:835px;top:291px;width:57px;height:13px;background:#e8e8e8;border:1px solid #f6f6f6;"></div>
<div class="a" style="left:840px;top:296px;width:3px;height:3px;background:#111;border-radius:50%;"></div>
<div class="t" style="left:850.00px;top:294.91px;font-size:7.2px;line-height:7.2px;color:#222;-webkit-text-stroke:0.25px;transform:scaleX(0.886);">5 pt. Round</div>
<div class="a" style="left:892px;top:291px;width:11px;height:13px;background:#474747;border-radius:2px;"></div>
<svg class="a" style="left:894px;top:295px;" width="7" height="5" viewBox="0 0 7 5"><path d="M1 1 L3.5 3.5 L6 1" stroke="#e6e6e6" stroke-width="1.3" fill="none"/></svg>
<div class="a" style="left:918px;top:294px;width:8px;height:8px;border:1px solid #6a6a6a;border-radius:1px;"></div>
<svg class="a" style="left:937.5px;top:293.5px;" width="11" height="9" viewBox="0 0 11 9"><path d="M0.8 8 V2.5 M2.8 8 V1.5 M4.8 8 V1 Q7.5 1.2 8.5 7.5" stroke="#e8e8e8" stroke-width="1.2" fill="none"/><circle cx="10" cy="8" r="0.8" fill="#e8e8e8"/></svg>
<div class="a" style="left:801px;top:309px;width:157px;height:1px;background:#444444;"></div>
<div class="t" style="left:806.60px;top:319.91px;font-size:7.2px;line-height:7.2px;color:#dcdcdc;-webkit-text-stroke:0.25px;transform:scaleX(0.883);">Quick Actions</div>
<div class="a" style="left:616px;top:151px;width:146px;height:187px;background:#3e3e3e;"></div>
<div class="a" style="left:617px;top:152px;width:144px;height:185px;background:#535353;"></div>
<div class="a" style="left:617px;top:152px;width:144px;height:7px;background:#424242;"></div>
<div class="a" style="left:617px;top:159px;width:144px;height:17px;background:#474747;"></div>
<div class="a" style="left:617px;top:159px;width:94px;height:17px;background:#535353;"></div>
<div class="a" style="left:711px;top:159px;width:1px;height:17px;background:#3e3e3e;"></div>
<div class="a" style="left:738px;top:159px;width:1px;height:17px;background:#3e3e3e;"></div>
<div class="t" style="left:622.50px;top:164.41px;font-size:7.2px;line-height:7.2px;color:#f2f2f2;font-weight:bold;transform:scaleX(0.836);">Artistic_ChalkCharcoalPencil</div>
<div class="t" style="left:716.00px;top:164.41px;font-size:7.2px;line-height:7.2px;color:#bdbdbd;-webkit-text-stroke:0.25px;transform:scaleX(1.111);">Artisti</div>
<div class="a" style="left:620px;top:180px;width:130px;height:141px;background:#8e8e8e;"></div>
<div class="a" style="left:621px;top:181px;width:128px;height:18px;background:#e4e4e4;"></div>
<div class="a" style="left:621px;top:200px;width:128px;height:19px;background:#e4e4e4;"></div>
<div class="a" style="left:621px;top:220px;width:128px;height:20.5px;background:#e4e4e4;"></div>
<div class="a" style="left:621px;top:241.5px;width:128px;height:20.0px;background:#e4e4e4;"></div>
<div class="a" style="left:621px;top:262.5px;width:128px;height:20.0px;background:#e4e4e4;"></div>
<div class="a" style="left:621px;top:283.5px;width:128px;height:19.0px;background:#e4e4e4;"></div>
<div class="a" style="left:621px;top:303.5px;width:128px;height:17.0px;background:#e4e4e4;"></div>
<div class="a" style="left:617px;top:334px;width:144px;height:1px;background:#3e3e3e;"></div>
<div class="a" style="left:617px;top:335px;width:144px;height:2px;background:#4a4a4a;"></div>
<svg class="a" style="left:683px;top:335px;" width="14" height="2" viewBox="0 0 14 2"><path d="M0 1 H14" stroke="#3e3e3e" stroke-width="1" stroke-dasharray="1 1"/></svg>
<div class="a" style="left:622px;top:352px;width:152px;height:151px;background:#3e3e3e;"></div>
<div class="a" style="left:623px;top:353px;width:150px;height:149px;background:#535353;"></div>
<div class="a" style="left:623px;top:353px;width:150px;height:18px;background:#454545;"></div>
<div class="a" style="left:623px;top:355px;width:40px;height:16px;background:#474747;"></div>
<div class="a" style="left:663px;top:354px;width:34px;height:17px;background:#535353;"></div>
<div class="a" style="left:697px;top:355px;width:36px;height:16px;background:#474747;"></div>
<div class="t" style="left:628.00px;top:360.24px;font-size:7.4px;line-height:7.4px;color:#b8b8b8;-webkit-text-stroke:0.25px;transform:scaleX(0.904);">Swatches</div>
<div class="t" style="left:668.50px;top:360.24px;font-size:7.4px;line-height:7.4px;color:#f2f2f2;font-weight:bold;transform:scaleX(0.844);">Brushes</div>
<div class="t" style="left:702.50px;top:360.24px;font-size:7.4px;line-height:7.4px;color:#bdbdbd;-webkit-text-stroke:0.25px;transform:scaleX(0.899);">Symbols</div>
<div class="a" style="left:627px;top:375px;width:136px;height:112px;background:#8a8a8a;"></div>
<div class="a" style="left:751px;top:375px;width:12px;height:21px;background:#535353;"></div>
<div class="a" style="left:628.5px;top:376px;width:18.0px;height:19.5px;background:#e4e4e4;"></div>
<div class="a" style="left:648px;top:376px;width:19.5px;height:19.5px;background:#e4e4e4;"></div>
<div class="a" style="left:669px;top:376px;width:19.5px;height:19.5px;background:#e4e4e4;"></div>
<div class="a" style="left:690px;top:376px;width:19px;height:19.5px;background:#e4e4e4;"></div>
<div class="a" style="left:710.5px;top:376px;width:19.5px;height:19.5px;background:#e4e4e4;"></div>
<div class="a" style="left:731.5px;top:376px;width:19.5px;height:19.5px;background:#e4e4e4;"></div>
<div class="a" style="left:627px;top:375px;width:21px;height:22px;border:1px solid #3a3a3a;"></div>
<div class="a" style="left:628px;top:376px;width:19px;height:20px;border:1px solid #f8f8f8;"></div>
<div class="a" style="left:627px;top:397px;width:135px;height:19.5px;background:#e4e4e4;"></div>
<div class="a" style="left:627px;top:417.5px;width:135px;height:19.5px;background:#e4e4e4;"></div>
<div class="a" style="left:627px;top:438px;width:135px;height:19.5px;background:#e4e4e4;"></div>
<div class="a" style="left:627px;top:459px;width:135px;height:20px;background:#e4e4e4;"></div>
<div class="a" style="left:627px;top:480px;width:135px;height:6px;background:#e4e4e4;"></div>
<div class="t" style="left:744.00px;top:404.07px;font-size:7px;line-height:7px;color:#111;-webkit-text-stroke:0.25px;transform:scaleX(0.847);">Basic</div>
<div class="t" style="left:647.00px;top:466.07px;font-size:7px;line-height:7px;color:#2b3a55;-webkit-text-stroke:0.25px;transform:scaleX(0.917);">6,00</div>
<div class="a" style="left:623px;top:497px;width:150px;height:1px;background:#3e3e3e;"></div>
<div class="a" style="left:623px;top:498px;width:150px;height:4px;background:#4a4a4a;"></div>
<svg class="a" style="left:691px;top:499px;" width="14" height="2" viewBox="0 0 14 2"><path d="M0 1 H14" stroke="#3e3e3e" stroke-width="1" stroke-dasharray="1 1"/></svg>
<svg class="a" style="left:0;top:0" width="960" height="640" viewBox="0 0 960 640"><path d="M741 153 L739 155 L741 157 M744 153 L742 155 L744 157" stroke="#dcdcdc" stroke-width="1" fill="none"/><path d="M753.5 153 L757.5 157 M757.5 153 L753.5 157" stroke="#eeeeee" stroke-width="1.3"/><path d="M752 165.5 H759 M752 167.8 H759 M752 170.1 H759" stroke="#bdbdbd" stroke-width="1"/><rect x="750" y="180" width="9" height="141" fill="#4a4a4a"/><rect x="751.5" y="247" width="6" height="44" rx="3" fill="#5e5e5e"/><path d="M752 186 L754.5 183.5 L757 186" stroke="#bbb" stroke-width="0.9" fill="none"/><path d="M752 315 L754.5 317.5 L757 315" stroke="#bbb" stroke-width="0.9" fill="none"/><path d="M625.0 187.9 L626.2 188.0 L627.4 187.7 L628.6 187.4 L629.8 187.9 L631.0 187.7 L632.2 187.7 L633.4 187.7 L634.6 187.1 L635.8 186.6 L637.0 186.7 L638.2 186.4 L639.4 186.6 L640.6 186.5 L641.8 186.4 L643.0 186.3 L644.2 186.2 L645.4 185.9 L646.6 185.6 L647.8 185.7 L649.0 186.3 L650.2 186.2 L651.4 186.2 L652.6 186.0 L653.8 186.5 L655.0 186.8 L656.2 186.6 L657.4 186.7 L658.6 187.0 L659.8 186.3 L661.0 186.5 L662.2 186.4 L663.4 186.0 L664.6 186.2 L665.8 185.6 L667.0 185.6 L668.2 185.3 L669.4 185.9 L670.6 186.1 L671.8 186.4 L673.0 186.6 L674.2 186.6 L675.4 186.5 L676.6 186.4 L677.8 186.8 L679.0 186.5 L680.2 186.1 L681.4 186.3 L682.6 186.0 L683.8 186.3 L685.0 186.0 L686.2 185.8 L687.4 186.3 L688.6 186.3 L689.8 186.4 L691.0 186.7 L692.2 186.9 L693.4 186.5 L694.6 186.1 L695.8 186.2 L697.0 186.3 L698.2 186.2 L699.4 186.3 L700.6 186.4 L701.8 186.7 L703.0 186.8 L704.2 186.5 L705.4 186.6 L706.6 186.3 L707.8 186.2 L709.0 186.3 L710.2 186.1 L711.4 186.1 L712.6 185.6 L713.8 186.0 L715.0 186.0 L716.2 186.3 L717.4 186.1 L718.6 185.9 L719.8 186.0 L721.0 185.7 L722.2 186.3 L723.4 185.8 L724.6 185.7 L725.8 185.7 L727.0 185.8 L728.2 186.1 L729.4 186.1 L730.6 185.8 L731.8 186.0 L733.0 186.3 L734.2 186.2 L735.4 186.7 L736.6 187.1 L737.8 187.0 L739.0 187.1 L740.2 186.8 L741.4 187.1 L742.6 187.2 L743.8 187.0 L745.0 187.3 L745.0 188.5 L743.8 188.5 L742.6 188.9 L741.4 188.7 L740.2 188.7 L739.0 188.6 L737.8 188.6 L736.6 189.0 L735.4 189.1 L734.2 189.5 L733.0 189.3 L731.8 189.5 L730.6 189.7 L729.4 190.2 L728.2 189.9 L727.0 190.3 L725.8 190.2 L724.6 190.5 L723.4 190.1 L722.2 190.4 L721.0 190.2 L719.8 190.0 L718.6 189.8 L717.4 189.9 L716.2 190.0 L715.0 190.1 L713.8 190.3 L712.6 190.5 L711.4 190.7 L710.2 190.5 L709.0 190.8 L707.8 190.3 L706.6 190.3 L705.4 190.5 L704.2 190.1 L703.0 189.7 L701.8 189.7 L700.6 190.0 L699.4 190.2 L698.2 190.1 L697.0 190.1 L695.8 190.1 L694.6 189.9 L693.4 190.1 L692.2 190.1 L691.0 190.4 L689.8 190.8 L688.6 190.5 L687.4 191.0 L686.2 190.6 L685.0 190.6 L683.8 190.5 L682.6 190.7 L681.4 190.5 L680.2 190.7 L679.0 190.7 L677.8 190.6 L676.6 190.9 L675.4 191.1 L674.2 190.7 L673.0 190.3 L671.8 190.0 L670.6 190.3 L669.4 190.5 L668.2 190.2 L667.0 190.4 L665.8 190.3 L664.6 190.0 L663.4 190.1 L662.2 190.3 L661.0 189.8 L659.8 190.4 L658.6 190.2 L657.4 190.5 L656.2 190.3 L655.0 190.9 L653.8 190.7 L652.6 190.7 L651.4 190.3 L650.2 190.5 L649.0 190.6 L647.8 190.3 L646.6 190.1 L645.4 190.3 L644.2 190.2 L643.0 190.2 L641.8 190.2 L640.6 190.4 L639.4 190.3 L638.2 190.1 L637.0 190.4 L635.8 190.4 L634.6 190.0 L633.4 189.4 L632.2 188.9 L631.0 189.0 L629.8 189.1 L628.6 188.9 L627.4 189.2 L626.2 189.2 L625.0 189.3Z" fill="#000"/><path d="M625.0 207.3 L626.2 206.9 L627.4 207.1 L628.6 206.6 L629.8 207.5 L631.0 206.8 L632.3 206.6 L633.5 206.9 L634.7 206.1 L635.9 206.5 L637.1 206.0 L638.3 205.3 L639.5 204.9 L640.7 205.0 L641.9 204.6 L643.1 204.6 L644.4 204.6 L645.6 205.1 L646.8 205.4 L648.0 205.7 L649.2 205.9 L650.4 205.5 L651.6 204.7 L652.8 205.6 L654.0 205.1 L655.2 204.9 L656.5 204.8 L657.7 204.8 L658.9 205.1 L660.1 205.5 L661.3 205.7 L662.5 205.1 L663.7 205.5 L664.9 205.0 L666.1 205.8 L667.4 205.8 L668.6 205.3 L669.8 204.9 L671.0 204.8 L672.2 205.3 L673.4 205.2 L674.6 204.7 L675.8 205.5 L677.0 205.3 L678.2 205.6 L679.5 205.7 L680.7 205.6 L681.9 206.1 L683.1 206.2 L684.3 205.7 L685.5 206.1 L686.7 205.4 L687.9 205.6 L689.1 205.9 L690.3 206.0 L691.5 205.6 L692.8 206.3 L694.0 205.7 L695.2 205.9 L696.4 205.1 L697.6 204.9 L698.8 205.1 L700.0 205.5 L701.2 205.2 L702.4 204.8 L703.6 205.3 L704.9 204.8 L706.1 204.7 L707.3 204.5 L708.5 205.5 L709.7 205.6 L710.9 206.2 L712.1 205.4 L713.3 205.9 L714.5 206.5 L715.8 206.4 L717.0 206.4 L718.2 206.2 L719.4 205.7 L720.6 205.3 L721.8 205.1 L723.0 205.1 L724.2 205.3 L725.4 204.5 L726.6 205.4 L727.9 205.7 L729.1 205.9 L730.3 206.2 L731.5 205.9 L732.7 206.3 L733.9 205.8 L735.1 205.9 L736.3 205.9 L737.5 206.9 L738.7 207.9 L740.0 208.3 L741.2 208.5 L742.4 207.7 L743.6 207.3 L744.8 207.0 L746.0 207.2 L746.0 210.1 L744.8 209.7 L743.6 209.3 L742.4 209.5 L741.2 210.0 L740.0 210.2 L738.7 210.7 L737.5 211.5 L736.3 211.4 L735.1 210.9 L733.9 211.7 L732.7 212.4 L731.5 212.7 L730.3 212.7 L729.1 212.8 L727.9 212.5 L726.6 212.0 L725.4 212.4 L724.2 212.5 L723.0 212.4 L721.8 212.6 L720.6 213.0 L719.4 212.6 L718.2 213.1 L717.0 213.0 L715.8 212.7 L714.5 212.5 L713.3 212.0 L712.1 212.6 L710.9 212.5 L709.7 212.9 L708.5 212.7 L707.3 212.3 L706.1 212.3 L704.9 212.7 L703.6 213.6 L702.4 213.0 L701.2 212.7 L700.0 213.5 L698.8 213.4 L697.6 213.2 L696.4 212.2 L695.2 212.5 L694.0 213.1 L692.8 213.0 L691.5 212.8 L690.3 213.3 L689.1 213.8 L687.9 213.5 L686.7 213.2 L685.5 212.9 L684.3 213.6 L683.1 213.0 L681.9 213.1 L680.7 213.1 L679.5 212.4 L678.2 212.1 L677.0 211.9 L675.8 211.9 L674.6 212.0 L673.4 212.1 L672.2 212.7 L671.0 211.9 L669.8 212.6 L668.6 211.6 L667.4 211.4 L666.1 212.1 L664.9 212.5 L663.7 212.3 L662.5 212.4 L661.3 211.7 L660.1 212.6 L658.9 212.6 L657.7 212.3 L656.5 213.2 L655.2 213.1 L654.0 212.5 L652.8 212.4 L651.6 211.6 L650.4 211.8 L649.2 212.2 L648.0 212.8 L646.8 213.3 L645.6 212.6 L644.4 212.7 L643.1 213.3 L641.9 213.7 L640.7 213.6 L639.5 213.4 L638.3 213.7 L637.1 212.9 L635.9 212.4 L634.7 212.1 L633.5 211.5 L632.3 210.4 L631.0 210.2 L629.8 210.0 L628.6 210.6 L627.4 210.3 L626.2 210.8 L625.0 210.9Z" fill="#000"/><path d="M626.0 230.1 L627.2 230.4 L628.4 230.1 L629.6 230.2 L630.8 230.1 L632.0 230.2 L633.2 229.9 L634.4 229.7 L635.6 229.4 L636.8 229.4 L638.0 229.2 L639.2 229.4 L640.4 229.2 L641.6 229.6 L642.8 229.4 L644.0 229.6 L645.2 229.2 L646.4 229.5 L647.6 229.2 L648.8 229.1 L650.0 229.0 L651.2 229.1 L652.4 229.0 L653.6 228.9 L654.8 229.0 L656.1 228.9 L657.3 229.2 L658.5 229.3 L659.7 229.1 L660.9 229.3 L662.1 229.2 L663.3 229.2 L664.5 229.0 L665.7 229.3 L666.9 229.1 L668.1 229.2 L669.3 229.3 L670.5 229.1 L671.7 228.9 L672.9 229.1 L674.1 229.1 L675.3 229.0 L676.5 229.4 L677.7 229.3 L678.9 229.4 L680.1 229.6 L681.3 229.4 L682.5 229.2 L683.7 229.3 L684.9 229.3 L686.1 229.6 L687.3 229.4 L688.5 229.6 L689.7 229.6 L690.9 229.4 L692.1 229.2 L693.3 229.2 L694.5 228.9 L695.7 229.1 L696.9 229.0 L698.1 229.3 L699.3 229.3 L700.5 229.5 L701.7 229.2 L702.9 229.2 L704.1 228.9 L705.3 229.1 L706.5 229.2 L707.7 229.4 L708.9 229.5 L710.1 229.5 L711.3 229.3 L712.5 229.3 L713.7 229.5 L714.9 229.5 L716.2 229.7 L717.4 229.4 L718.6 229.3 L719.8 229.4 L721.0 229.2 L722.2 229.1 L723.4 229.2 L724.6 229.4 L725.8 229.6 L727.0 229.5 L728.2 229.4 L729.4 229.5 L730.6 229.3 L731.8 229.3 L733.0 229.3 L734.2 229.5 L735.4 229.5 L736.6 229.9 L737.8 230.1 L739.0 230.1 L740.2 229.9 L741.4 230.2 L742.6 230.2 L743.8 230.1 L745.0 230.1 L745.0 230.9 L743.8 231.1 L742.6 231.1 L741.4 231.0 L740.2 231.0 L739.0 230.8 L737.8 231.0 L736.6 231.3 L735.4 231.1 L734.2 231.1 L733.0 231.3 L731.8 231.5 L730.6 231.4 L729.4 231.2 L728.2 231.5 L727.0 231.8 L725.8 231.8 L724.6 232.1 L723.4 232.0 L722.2 232.1 L721.0 232.0 L719.8 232.1 L718.6 232.0 L717.4 232.0 L716.2 232.0 L714.9 232.0 L713.7 232.0 L712.5 231.8 L711.3 232.1 L710.1 231.8 L708.9 231.8 L707.7 231.7 L706.5 231.5 L705.3 231.6 L704.1 231.8 L702.9 232.0 L701.7 231.9 L700.5 231.9 L699.3 231.6 L698.1 232.0 L696.9 232.1 L695.7 232.0 L694.5 232.1 L693.3 231.9 L692.1 231.8 L690.9 231.9 L689.7 231.8 L688.5 231.8 L687.3 231.8 L686.1 231.7 L684.9 231.7 L683.7 231.8 L682.5 231.9 L681.3 232.2 L680.1 232.1 L678.9 232.1 L677.7 232.0 L676.5 232.1 L675.3 232.0 L674.1 231.8 L672.9 231.7 L671.7 232.0 L670.5 232.2 L669.3 231.8 L668.1 232.0 L666.9 231.9 L665.7 231.8 L664.5 231.7 L663.3 231.8 L662.1 231.6 L660.9 231.7 L659.7 231.4 L658.5 231.6 L657.3 231.5 L656.1 231.6 L654.8 231.7 L653.6 231.6 L652.4 231.9 L651.2 231.9 L650.0 232.1 L648.8 232.0 L647.6 231.8 L646.4 232.1 L645.2 232.1 L644.0 231.9 L642.8 232.0 L641.6 232.2 L640.4 231.9 L639.2 232.1 L638.0 231.9 L636.8 231.7 L635.6 231.6 L634.4 231.6 L633.2 231.4 L632.0 231.2 L630.8 230.8 L629.6 231.0 L628.4 230.9 L627.2 230.7 L626.0 231.0Z" fill="#000"/><path d="M625.0 250.8 L626.2 250.4 L627.4 250.6 L628.6 249.3 L629.8 249.6 L631.0 250.5 L632.3 249.8 L633.5 249.7 L634.7 249.5 L635.9 249.6 L637.1 249.2 L638.3 248.9 L639.5 248.7 L640.7 248.9 L641.9 249.1 L643.1 248.1 L644.3 248.9 L645.5 248.1 L646.8 247.6 L648.0 248.5 L649.2 249.0 L650.4 249.2 L651.6 249.2 L652.8 248.6 L654.0 249.0 L655.2 248.1 L656.4 247.8 L657.6 248.4 L658.8 247.5 L660.1 248.2 L661.3 248.5 L662.5 248.5 L663.7 247.1 L664.9 247.9 L666.1 249.0 L667.3 247.3 L668.5 246.8 L669.7 246.9 L670.9 246.4 L672.1 247.4 L673.4 248.4 L674.6 247.4 L675.8 246.9 L677.0 247.6 L678.2 248.3 L679.4 248.6 L680.6 249.1 L681.8 248.7 L683.0 248.7 L684.2 249.6 L685.4 248.0 L686.6 247.5 L687.9 247.2 L689.1 247.7 L690.3 247.1 L691.5 247.5 L692.7 248.3 L693.9 248.7 L695.1 247.8 L696.3 247.4 L697.5 246.7 L698.7 246.2 L699.9 247.1 L701.2 246.4 L702.4 247.0 L703.6 247.1 L704.8 248.0 L706.0 248.7 L707.2 247.7 L708.4 246.6 L709.6 246.5 L710.8 247.8 L712.0 247.8 L713.2 247.1 L714.5 247.2 L715.7 246.8 L716.9 247.8 L718.1 248.6 L719.3 248.9 L720.5 249.4 L721.7 248.1 L722.9 248.5 L724.1 247.7 L725.3 249.2 L726.5 250.3 L727.7 249.5 L729.0 250.1 L730.2 249.8 L731.4 250.4 L732.6 251.5 L733.8 251.0 L735.0 251.6 L735.0 254.3 L733.8 254.6 L732.6 254.0 L731.4 253.5 L730.2 254.1 L729.0 254.4 L727.7 255.4 L726.5 255.2 L725.3 254.6 L724.1 254.6 L722.9 255.3 L721.7 254.6 L720.5 254.5 L719.3 253.8 L718.1 255.0 L716.9 255.6 L715.7 255.0 L714.5 256.6 L713.2 256.6 L712.0 255.8 L710.8 255.0 L709.6 254.5 L708.4 255.1 L707.2 255.5 L706.0 255.4 L704.8 256.0 L703.6 254.3 L702.4 254.5 L701.2 255.1 L699.9 255.9 L698.7 256.4 L697.5 256.5 L696.3 256.4 L695.1 255.8 L693.9 256.9 L692.7 255.5 L691.5 256.0 L690.3 255.5 L689.1 255.8 L687.9 256.2 L686.6 256.1 L685.4 255.6 L684.2 255.6 L683.0 255.9 L681.8 255.6 L680.6 256.0 L679.4 255.5 L678.2 255.9 L677.0 254.7 L675.8 255.8 L674.6 255.9 L673.4 255.2 L672.1 256.0 L670.9 255.4 L669.7 255.1 L668.5 254.5 L667.3 254.3 L666.1 255.4 L664.9 256.1 L663.7 255.3 L662.5 256.4 L661.3 256.0 L660.1 255.7 L658.8 256.0 L657.6 255.7 L656.4 254.5 L655.2 255.3 L654.0 254.5 L652.8 254.9 L651.6 253.7 L650.4 253.2 L649.2 253.7 L648.0 254.0 L646.8 254.8 L645.5 255.5 L644.3 255.3 L643.1 256.1 L641.9 254.3 L640.7 255.0 L639.5 256.4 L638.3 255.4 L637.1 256.1 L635.9 255.7 L634.7 254.6 L633.5 255.1 L632.3 253.7 L631.0 253.9 L629.8 254.1 L628.6 253.2 L627.4 252.4 L626.2 253.1 L625.0 251.8Z" fill="#000"/><path d="M624.0 270.4 L625.2 269.9 L626.4 268.9 L627.6 267.9 L628.8 267.5 L630.0 268.1 L631.2 267.3 L632.5 267.4 L633.7 267.4 L634.9 268.2 L636.1 268.3 L637.3 268.0 L638.5 267.7 L639.7 267.9 L640.9 268.0 L642.1 268.5 L643.3 267.7 L644.5 268.2 L645.7 268.2 L647.0 268.6 L648.2 267.9 L649.4 267.7 L650.6 268.4 L651.8 267.9 L653.0 268.2 L654.2 267.8 L655.4 268.1 L656.6 267.4 L657.8 268.0 L659.0 267.8 L660.2 268.1 L661.4 267.9 L662.7 268.4 L663.9 268.2 L665.1 267.7 L666.3 267.8 L667.5 268.4 L668.7 267.9 L669.9 267.8 L671.1 267.7 L672.3 268.4 L673.5 268.5 L674.7 268.7 L675.9 268.7 L677.1 268.4 L678.4 268.8 L679.6 268.6 L680.8 268.2 L682.0 267.7 L683.2 268.3 L684.4 268.1 L685.6 268.1 L686.8 268.2 L688.0 268.4 L689.2 268.7 L690.4 268.2 L691.6 267.9 L692.9 268.0 L694.1 267.9 L695.3 268.1 L696.5 267.8 L697.7 267.6 L698.9 267.6 L700.1 267.2 L701.3 267.5 L702.5 267.7 L703.7 268.0 L704.9 267.9 L706.1 267.4 L707.3 266.8 L708.6 267.3 L709.8 266.9 L711.0 267.1 L712.2 267.6 L713.4 267.9 L714.6 268.2 L715.8 268.0 L717.0 268.0 L718.2 268.5 L719.4 268.3 L720.6 268.0 L721.8 268.0 L723.0 267.5 L724.3 267.3 L725.5 267.9 L726.7 268.2 L727.9 267.8 L729.1 268.1 L730.3 267.8 L731.5 267.3 L732.7 267.9 L733.9 268.4 L735.1 268.2 L736.3 267.8 L737.5 268.1 L738.8 268.5 L740.0 268.4 L741.2 268.6 L742.4 268.6 L743.6 270.2 L744.8 271.1 L746.0 271.2 L746.0 273.9 L744.8 273.7 L743.6 274.3 L742.4 276.5 L741.2 276.2 L740.0 276.1 L738.8 275.4 L737.5 276.1 L736.3 276.0 L735.1 275.4 L733.9 275.3 L732.7 275.7 L731.5 275.8 L730.3 275.7 L729.1 275.4 L727.9 276.3 L726.7 276.2 L725.5 275.7 L724.3 275.9 L723.0 275.7 L721.8 274.9 L720.6 275.2 L719.4 275.1 L718.2 275.7 L717.0 275.5 L715.8 275.7 L714.6 275.2 L713.4 275.7 L712.2 275.5 L711.0 275.2 L709.8 275.9 L708.6 276.6 L707.3 276.2 L706.1 276.5 L704.9 276.4 L703.7 275.9 L702.5 275.8 L701.3 276.4 L700.1 275.9 L698.9 276.2 L697.7 276.3 L696.5 275.6 L695.3 275.4 L694.1 275.5 L692.9 275.9 L691.6 275.9 L690.4 276.1 L689.2 276.8 L688.0 276.7 L686.8 276.3 L685.6 276.9 L684.4 276.2 L683.2 275.8 L682.0 276.7 L680.8 276.0 L679.6 276.4 L678.4 275.6 L677.1 275.3 L675.9 275.2 L674.7 275.3 L673.5 275.5 L672.3 276.2 L671.1 276.1 L669.9 276.8 L668.7 277.2 L667.5 277.3 L666.3 277.1 L665.1 276.8 L663.9 276.5 L662.7 276.3 L661.4 276.4 L660.2 276.8 L659.0 276.7 L657.8 276.3 L656.6 276.7 L655.4 276.4 L654.2 277.0 L653.0 276.8 L651.8 276.3 L650.6 276.2 L649.4 276.3 L648.2 276.3 L647.0 276.1 L645.7 275.9 L644.5 276.6 L643.3 276.2 L642.1 276.1 L640.9 275.9 L639.7 275.7 L638.5 276.1 L637.3 275.6 L636.1 275.4 L634.9 275.5 L633.7 275.2 L632.5 275.6 L631.2 275.6 L630.0 274.7 L628.8 275.0 L627.6 274.8 L626.4 273.9 L625.2 273.1 L624.0 273.8Z" fill="#000"/><path d="M624.0 290.2 L625.2 290.1 L626.4 290.7 L627.6 290.1 L628.8 290.0 L630.0 289.5 L631.3 288.9 L632.5 288.4 L633.7 288.0 L634.9 288.4 L636.1 287.2 L637.3 288.0 L638.5 287.4 L639.7 286.3 L640.9 287.1 L642.1 286.8 L643.4 286.6 L644.6 287.0 L645.8 286.3 L647.0 287.7 L648.2 287.6 L649.4 287.2 L650.6 287.6 L651.8 286.3 L653.0 286.6 L654.2 288.2 L655.5 287.9 L656.7 288.8 L657.9 287.8 L659.1 287.8 L660.3 287.2 L661.5 286.8 L662.7 287.3 L663.9 288.0 L665.1 286.9 L666.4 286.3 L667.6 286.3 L668.8 286.9 L670.0 286.6 L671.2 287.2 L672.4 288.2 L673.6 288.0 L674.8 288.5 L676.0 288.0 L677.2 286.8 L678.5 286.9 L679.7 286.5 L680.9 286.4 L682.1 286.3 L683.3 287.8 L684.5 287.9 L685.7 288.5 L686.9 287.3 L688.1 287.5 L689.3 287.4 L690.5 287.6 L691.8 287.3 L693.0 287.3 L694.2 287.5 L695.4 286.5 L696.6 287.8 L697.8 288.3 L699.0 288.1 L700.2 287.8 L701.4 287.9 L702.6 286.9 L703.9 286.0 L705.1 285.4 L706.3 285.6 L707.5 285.0 L708.7 285.6 L709.9 286.6 L711.1 286.7 L712.3 286.0 L713.5 287.0 L714.8 287.5 L716.0 288.5 L717.2 288.8 L718.4 288.0 L719.6 287.5 L720.8 286.8 L722.0 286.2 L723.2 286.8 L724.4 286.8 L725.6 286.9 L726.9 287.6 L728.1 288.0 L729.3 287.6 L730.5 287.7 L731.7 287.2 L732.9 288.0 L734.1 289.3 L735.3 290.0 L736.5 291.2 L737.7 290.8 L739.0 291.2 L740.2 291.1 L741.4 290.6 L742.6 291.4 L743.8 291.0 L745.0 291.4 L745.0 295.3 L743.8 295.1 L742.6 294.4 L741.4 295.2 L740.2 293.8 L739.0 293.2 L737.7 293.2 L736.5 294.5 L735.3 293.8 L734.1 294.0 L732.9 295.4 L731.7 296.8 L730.5 296.7 L729.3 297.4 L728.1 296.9 L726.9 297.5 L725.6 297.9 L724.4 298.3 L723.2 298.0 L722.0 297.6 L720.8 298.5 L719.6 299.1 L718.4 299.0 L717.2 298.6 L716.0 298.5 L714.8 297.8 L713.5 297.9 L712.3 299.1 L711.1 299.4 L709.9 299.1 L708.7 297.9 L707.5 297.0 L706.3 297.7 L705.1 298.8 L703.9 297.8 L702.6 297.8 L701.4 298.4 L700.2 298.5 L699.0 298.6 L697.8 297.6 L696.6 297.8 L695.4 298.5 L694.2 297.8 L693.0 298.8 L691.8 298.9 L690.5 299.2 L689.3 299.0 L688.1 299.2 L686.9 298.1 L685.7 297.7 L684.5 297.6 L683.3 298.0 L682.1 298.9 L680.9 298.2 L679.7 297.9 L678.5 298.0 L677.2 297.2 L676.0 297.7 L674.8 297.6 L673.6 297.9 L672.4 298.0 L671.2 299.2 L670.0 297.9 L668.8 298.3 L667.6 297.4 L666.4 297.3 L665.1 298.1 L663.9 298.8 L662.7 298.2 L661.5 297.7 L660.3 296.8 L659.1 297.3 L657.9 298.1 L656.7 297.7 L655.5 298.6 L654.2 298.2 L653.0 298.2 L651.8 298.3 L650.6 297.6 L649.4 297.5 L648.2 298.7 L647.0 297.3 L645.8 298.0 L644.6 298.7 L643.4 299.8 L642.1 299.6 L640.9 298.9 L639.7 297.7 L638.5 297.0 L637.3 298.0 L636.1 297.4 L634.9 297.0 L633.7 296.5 L632.5 296.0 L631.3 295.6 L630.0 295.7 L628.8 294.8 L627.6 294.4 L626.4 295.4 L625.2 295.1 L624.0 294.6Z" fill="#000"/><path d="M624.0 313.7 L625.2 313.7 L626.4 313.5 L627.6 313.4 L628.8 313.2 L630.0 313.3 L631.3 313.2 L632.5 313.3 L633.7 313.2 L634.9 313.2 L636.1 313.0 L637.3 313.0 L638.5 312.9 L639.7 313.1 L640.9 313.2 L642.1 313.4 L643.4 313.3 L644.6 313.5 L645.8 313.3 L647.0 313.3 L648.2 313.4 L649.4 313.4 L650.6 313.1 L651.8 313.3 L653.0 313.3 L654.2 313.4 L655.5 313.5 L656.7 313.2 L657.9 313.2 L659.1 313.2 L660.3 312.9 L661.5 313.1 L662.7 313.0 L663.9 312.9 L665.1 312.8 L666.4 312.8 L667.6 313.0 L668.8 313.0 L670.0 313.2 L671.2 313.0 L672.4 313.1 L673.6 313.2 L674.8 312.9 L676.0 313.0 L677.2 313.2 L678.5 313.1 L679.7 313.1 L680.9 313.2 L682.1 313.2 L683.3 313.2 L684.5 313.2 L685.7 313.3 L686.9 313.1 L688.1 313.0 L689.3 312.9 L690.5 313.0 L691.8 313.0 L693.0 312.9 L694.2 312.8 L695.4 312.9 L696.6 313.2 L697.8 313.0 L699.0 312.8 L700.2 312.9 L701.4 313.0 L702.6 312.9 L703.9 313.1 L705.1 313.2 L706.3 313.3 L707.5 313.5 L708.7 313.2 L709.9 313.0 L711.1 313.2 L712.3 313.2 L713.5 313.1 L714.8 313.2 L716.0 313.3 L717.2 313.3 L718.4 313.1 L719.6 313.1 L720.8 313.2 L722.0 313.1 L723.2 313.1 L724.4 312.9 L725.6 313.0 L726.9 313.1 L728.1 313.2 L729.3 313.1 L730.5 313.1 L731.7 313.2 L732.9 312.9 L734.1 313.0 L735.3 313.0 L736.5 313.2 L737.7 313.1 L739.0 313.3 L740.2 313.2 L741.4 313.2 L742.6 313.4 L743.8 313.6 L745.0 313.5 L745.0 313.9 L743.8 314.0 L742.6 314.3 L741.4 314.6 L740.2 314.4 L739.0 314.7 L737.7 314.6 L736.5 314.6 L735.3 314.7 L734.1 314.7 L732.9 314.6 L731.7 314.7 L730.5 314.6 L729.3 314.5 L728.1 314.4 L726.9 314.4 L725.6 314.6 L724.4 314.8 L723.2 314.6 L722.0 314.7 L720.8 314.5 L719.6 314.5 L718.4 314.6 L717.2 314.4 L716.0 314.3 L714.8 314.2 L713.5 314.2 L712.3 314.2 L711.1 314.4 L709.9 314.6 L708.7 314.6 L707.5 314.7 L706.3 314.5 L705.1 314.3 L703.9 314.2 L702.6 314.4 L701.4 314.4 L700.2 314.3 L699.0 314.5 L697.8 314.4 L696.6 314.5 L695.4 314.4 L694.2 314.4 L693.0 314.7 L691.8 314.5 L690.5 314.5 L689.3 314.4 L688.1 314.3 L686.9 314.4 L685.7 314.3 L684.5 314.5 L683.3 314.6 L682.1 314.4 L680.9 314.5 L679.7 314.6 L678.5 314.4 L677.2 314.5 L676.0 314.4 L674.8 314.5 L673.6 314.6 L672.4 314.7 L671.2 314.7 L670.0 314.5 L668.8 314.6 L667.6 314.5 L666.4 314.4 L665.1 314.7 L663.9 314.4 L662.7 314.3 L661.5 314.3 L660.3 314.2 L659.1 314.2 L657.9 314.3 L656.7 314.4 L655.5 314.3 L654.2 314.4 L653.0 314.5 L651.8 314.7 L650.6 314.5 L649.4 314.4 L648.2 314.5 L647.0 314.6 L645.8 314.6 L644.6 314.5 L643.4 314.4 L642.1 314.6 L640.9 314.7 L639.7 314.6 L638.5 314.3 L637.3 314.3 L636.1 314.3 L634.9 314.5 L633.7 314.4 L632.5 314.5 L631.3 314.3 L630.0 314.3 L628.8 314.2 L627.6 314.3 L626.4 313.9 L625.2 313.8 L624.0 314.0Z" fill="#000"/><path d="M624.5 332 V325 M626.5 332 V324.5 M628.5 332 V324 Q631.5 324 633 331" stroke="#e0e0e0" stroke-width="1.1" fill="none"/><circle cx="634" cy="332" r="0.6" fill="#e0e0e0"/><path d="M648 323.5 L644 327.5 L648 331.5Z" fill="#e0e0e0"/><path d="M659 323.5 L663 327.5 L659 331.5Z" fill="#e0e0e0"/><path d="M731.5 323.5 L739 331 M739 323.5 L731.5 331" stroke="#e0e0e0" stroke-width="1.5"/><path d="M737 324 L739.5 322" stroke="#e0e0e0" stroke-width="1"/><path d="M749.5 359.5 L752 362 L749.5 364.5 M752.5 359.5 L755 362 L752.5 364.5" stroke="#e8e8e8" stroke-width="1" fill="none"/><rect x="759" y="358.5" width="0.9" height="7" fill="#9a9a9a"/><path d="M763 359 H770 M763 361.5 H770 M763 364 H770" stroke="#aaa" stroke-width="1.1"/><rect x="762.5" y="358.5" width="8" height="6.5" fill="none" stroke="#777" stroke-width="0.6"/><circle cx="637" cy="386" r="1.9" fill="#000"/><circle cx="657.5" cy="386" r="4.6" fill="#000"/><circle cx="678.3" cy="386" r="0.9" fill="#000"/><ellipse cx="699" cy="386" rx="1.6" ry="1.1" transform="rotate(20 699 386)" fill="#000"/><rect x="720" y="384.5" width="0.4" height="3" fill="#666"/><circle cx="740.5" cy="386" r="3.8" fill="#000"/><rect x="630" y="405.8" width="111.5" height="1.7" fill="#000"/><path d="M631.0 426.2 L632.2 426.0 L633.4 426.3 L634.6 426.7 L635.8 426.9 L637.0 426.7 L638.2 426.2 L639.4 426.2 L640.6 426.3 L641.8 425.7 L643.0 426.1 L644.2 425.8 L645.4 425.9 L646.6 425.8 L647.8 425.5 L649.0 425.4 L650.2 424.7 L651.4 425.1 L652.6 425.3 L653.8 425.7 L655.0 425.6 L656.2 425.0 L657.4 425.2 L658.6 424.9 L659.8 425.3 L661.0 425.1 L662.2 425.2 L663.4 425.6 L664.6 425.4 L665.8 425.4 L667.0 425.4 L668.2 425.0 L669.4 424.7 L670.6 424.9 L671.8 424.7 L673.0 424.4 L674.2 424.6 L675.4 424.6 L676.6 424.5 L677.8 424.6 L679.0 424.4 L680.2 425.3 L681.4 424.7 L682.6 424.7 L683.8 424.6 L685.0 424.7 L686.2 425.2 L687.4 425.2 L688.6 424.9 L689.8 425.3 L691.0 425.7 L692.2 425.5 L693.4 425.2 L694.6 425.6 L695.8 425.2 L697.0 425.1 L698.2 424.7 L699.4 425.0 L700.6 424.8 L701.8 425.1 L703.0 425.3 L704.2 425.1 L705.4 425.5 L706.6 425.7 L707.8 425.9 L709.0 425.2 L710.2 424.9 L711.4 424.7 L712.6 425.0 L713.8 424.8 L715.0 425.1 L716.2 425.0 L717.4 424.9 L718.6 424.8 L719.8 424.6 L721.0 424.5 L722.2 425.1 L723.4 425.1 L724.6 425.3 L725.8 425.3 L727.0 425.2 L728.2 425.4 L729.4 425.5 L730.6 426.1 L731.8 425.9 L733.0 425.5 L734.2 425.2 L735.4 425.5 L736.6 425.7 L737.8 425.9 L739.0 426.4 L740.2 426.4 L741.4 426.2 L742.6 426.2 L743.8 425.7 L745.0 425.8 L745.0 427.8 L743.8 427.7 L742.6 427.2 L741.4 427.9 L740.2 427.5 L739.0 427.8 L737.8 427.4 L736.6 427.0 L735.4 426.8 L734.2 427.2 L733.0 427.7 L731.8 428.0 L730.6 428.1 L729.4 428.8 L728.2 428.4 L727.0 428.4 L725.8 428.2 L724.6 428.0 L723.4 428.2 L722.2 428.5 L721.0 428.7 L719.8 428.5 L718.6 428.1 L717.4 428.4 L716.2 428.7 L715.0 429.0 L713.8 428.8 L712.6 428.5 L711.4 428.7 L710.2 428.5 L709.0 429.2 L707.8 429.0 L706.6 428.8 L705.4 428.7 L704.2 428.8 L703.0 429.1 L701.8 428.9 L700.6 428.7 L699.4 428.3 L698.2 427.8 L697.0 428.3 L695.8 428.0 L694.6 428.2 L693.4 428.3 L692.2 427.9 L691.0 428.3 L689.8 428.7 L688.6 428.5 L687.4 428.6 L686.2 428.2 L685.0 428.8 L683.8 428.1 L682.6 428.4 L681.4 428.4 L680.2 428.2 L679.0 428.3 L677.8 428.3 L676.6 428.8 L675.4 429.0 L674.2 428.5 L673.0 428.8 L671.8 429.2 L670.6 428.9 L669.4 428.5 L668.2 428.6 L667.0 428.1 L665.8 428.2 L664.6 428.2 L663.4 428.6 L662.2 428.4 L661.0 428.8 L659.8 428.7 L658.6 428.2 L657.4 427.8 L656.2 428.1 L655.0 428.2 L653.8 428.1 L652.6 428.3 L651.4 428.7 L650.2 428.1 L649.0 427.7 L647.8 427.8 L646.6 427.7 L645.4 428.0 L644.2 427.9 L643.0 428.3 L641.8 428.4 L640.6 428.0 L639.4 428.1 L638.2 427.4 L637.0 427.1 L635.8 427.0 L634.6 427.6 L633.4 427.1 L632.2 427.3 L631.0 427.4Z" fill="#000"/><path d="M631 445.8 H758" stroke="#c89a78" stroke-width="1.1"/><rect x="648" y="445" width="92" height="2.6" fill="#f2b89a" opacity="0.85"/><path d="M641 442.5 Q648 443.5 647.5 447 Q646 451 641 453 Q635.5 454.5 636 452 Q637 448.5 644 446.5" stroke="#e8641e" stroke-width="1" fill="none"/><path d="M640 441 L642.5 442.6 L640.5 444.4" stroke="#e8641e" stroke-width="0.9" fill="none"/><path d="M748 442.5 Q741 443.5 741.5 447 Q743 451 748 453 Q753.5 454.5 753 452 Q752 448.5 745 446.5" stroke="#e8641e" stroke-width="1" fill="none"/><path d="M749 441 L746.5 442.6 L748.5 444.4" stroke="#e8641e" stroke-width="0.9" fill="none"/><circle cx="631.5" cy="445.8" r="0.9" fill="#a07050"/><circle cx="757.5" cy="445.8" r="0.9" fill="#a07050"/><path d="M632.5 466 H635.5 L640.5 463 Q643 468.5 640.5 474 L635.5 471 H632.5Z" fill="#e4e4e4" stroke="#111" stroke-width="1.2"/><rect x="632.5" y="466" width="3" height="5" fill="#111"/><defs><filter id="blr" x="-20%" y="-50%" width="140%" height="200%"><feGaussianBlur stdDeviation="0.9"/></filter></defs><path d="M680 468.5 Q690 461 703 464 Q716 468 728 471.5 Q740 472 746 467" stroke="#6e6e6e" stroke-width="4.8" fill="none" stroke-linecap="round" filter="url(#blr)"/><path d="M647 480 V482.5 M668 480 V482.5 M689 480 V482.5 M710 480 V482.5 M731 480 V482.5" stroke="#222" stroke-width="0.7"/><rect x="631" y="484" width="57" height="2" fill="#2a3a5a"/><rect x="695" y="480" width="9" height="6" fill="#1e2e4e"/><rect x="763" y="375" width="8" height="112" fill="#4a4a4a"/><rect x="764.5" y="383" width="5.5" height="74" rx="2.7" fill="#5a5a5a"/><path d="M764.5 380 L767 377.5 L769.5 380" stroke="#bbb" stroke-width="0.9" fill="none"/><path d="M764.5 482 L767 484.5 L769.5 482" stroke="#bbb" stroke-width="0.9" fill="none"/><path d="M630.5 494 V488 M632.5 494 V487.5 M634.5 494 V487 Q637.5 487 639 493" stroke="#e0e0e0" stroke-width="1.1" fill="none"/><circle cx="640" cy="494" r="0.6" fill="#e0e0e0"/><rect x="645" y="487.5" width="5" height="5" fill="#e0e0e0"/><circle cx="651" cy="492" r="3" fill="#535353" stroke="#e0e0e0" stroke-width="1"/><path d="M700.5 488 L707 494.5 M707 488 L700.5 494.5" stroke="#777" stroke-width="1.3"/><rect x="716" y="487.5" width="7" height="7" fill="none" stroke="#707070" stroke-width="1"/><path d="M733 488 H740 V495 H735 L733 493Z" fill="#e0e0e0"/><path d="M749.5 489.5 H756.5 M751 489.5 V495.5 H755 V489.5 M752 488 H754" stroke="#e0e0e0" stroke-width="1" fill="none"/><rect x="765" y="335" width="8" height="17" rx="4" fill="#5a5a5a"/></svg>
<div class="a" style="left:142px;top:592px;width:677px;height:48px;background:rgba(255,255,255,0.9);"></div>
<div class="t" style="left:213.80px;top:601.74px;font-size:27px;line-height:27px;color:#464646;transform:scaleX(1.012);">Adobe</div>
<div class="t" style="left:298.20px;top:601.74px;font-size:27px;line-height:27px;color:#464646;transform:scaleX(1.077);">Illustrator</div>
<div class="t" style="left:424.20px;top:601.74px;font-size:27px;line-height:27px;color:#464646;transform:scaleX(1.041);">interface:</div>
<div class="t" style="left:545.30px;top:601.74px;font-size:27px;line-height:27px;color:#464646;transform:scaleX(1.046);">drawing</div>
<div class="t" style="left:649.30px;top:601.74px;font-size:27px;line-height:27px;color:#464646;transform:scaleX(1.013);">process</div>
</body></html>
